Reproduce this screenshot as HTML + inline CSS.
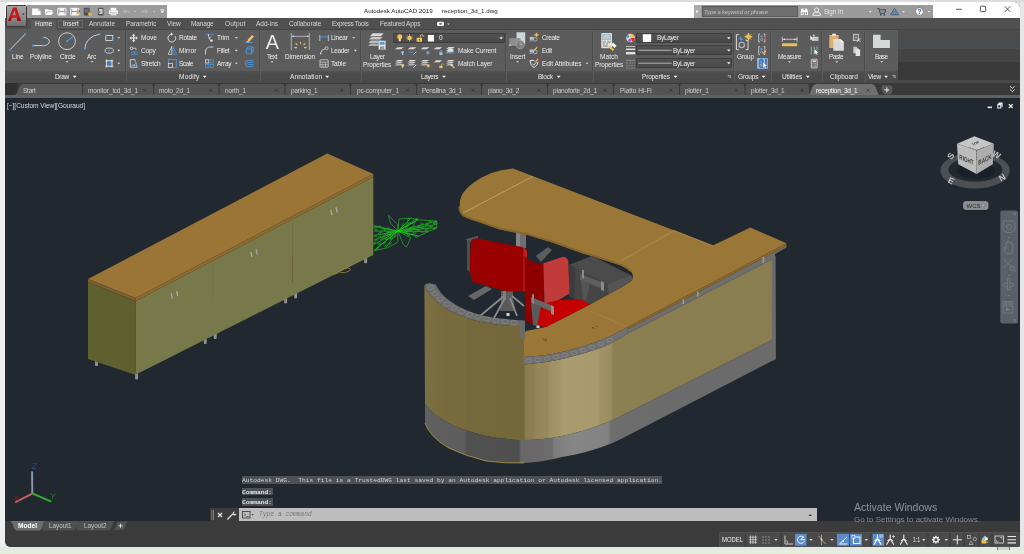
<!DOCTYPE html>
<html><head><meta charset="utf-8"><title>Autodesk AutoCAD 2019 - reception_3d_1.dwg</title>
<style>
html,body{margin:0;padding:0;}
body{width:1024px;height:554px;overflow:hidden;position:relative;background:#e6e6e6;font-family:"Liberation Sans",sans-serif;font-size:7px;color:#e6e6e6;}
body:after{content:"";position:absolute;left:0;top:0;width:1024px;height:2px;background:#dcdcdc;}
body:before{content:"";position:absolute;left:0;top:549.500px;width:1024px;height:4.500px;background:#e3eede;}
#win{position:absolute;left:5px;top:2px;width:1015px;height:545px;background:#3b3b3b;border-radius:2px 6px 2px 6px;overflow:hidden;}
.abs{position:absolute;}
.t{position:absolute;white-space:nowrap;line-height:1;}
svg{position:absolute;overflow:visible;}
/* title */
#title{position:absolute;left:0;top:0;width:1015px;height:16px;background:#fff;}
#qat{position:absolute;left:22px;top:3px;width:140px;height:13px;background:#9b9b9b;}
#info{position:absolute;left:689px;top:3px;width:238px;height:13px;background:#9b9b9b;}
#search{position:absolute;left:696px;top:3px;width:110px;height:13px;background:#6e6e6e;}
#appbtn{position:absolute;left:0px;top:3px;width:22px;height:22px;background:linear-gradient(#9a9a9a,#8c8c8c 60%,#6a6a6a);border:1px solid #3a3a3a;border-radius:2px;box-sizing:border-box;z-index:5;}
/* ribbon tabs */
#ribtabs{position:absolute;left:0;top:16px;width:1015px;height:12px;background:#4d4d4d;}
#ribtabs .t{top:3px;font-size:7px;color:#dcdcdc;}
/* ribbon */
#ribbon{position:absolute;left:0;top:28px;width:1015px;height:53px;background:#3a3a3a;}
.panel{position:absolute;top:0;height:41px;background:#5a5a5a;}
.ptitle{position:absolute;top:41px;height:9px;background:#4b4b4b;}
/* file tabs */
#filetabs{position:absolute;left:0;top:81px;width:1015px;height:14px;background:#404040;}
/* drawing */
#draw{position:absolute;left:0;top:95px;width:1015px;height:424px;background:#212830;overflow:hidden;}
/* status */
#status{position:absolute;left:0;top:519px;width:1015px;height:26px;background:#3b3b3b;}
#cmdhist .hl{position:absolute;left:237px;height:7.500px;line-height:9px;background:#4d5156;color:#cfcfcf;font-family:"Liberation Mono",monospace;font-size:6.250px;white-space:nowrap;overflow:hidden;}
#cmdhist .hl.b{font-weight:bold;color:#e4e4e4;width:31px;}
#cmdbar{position:absolute;left:204.500px;top:505.500px;width:607px;height:13.500px;}
#cmdgrip{position:absolute;left:0;top:0;width:29px;height:13.500px;background:#3c3c3c;}
#cmdin{position:absolute;left:29px;top:0;width:578px;height:13.500px;background:#bebebe;}
#sticons{position:absolute;left:714px;top:12.500px;width:301px;height:12.500px;background:#484848;}
.pg{position:absolute;left:-5px;top:-2px;width:1024px;height:554px;pointer-events:none;}
.t{will-change:transform;}

</style></head>
<body>
<div id="win">
<div class="pg">
<div class="abs" style="left:5px;top:2px;width:1015px;height:16.200px;background:#fff"></div>
<div class="abs" style="left:27px;top:5.300px;width:139.800px;height:12.700px;background:#9b9b9b"></div>
<div class="abs" style="left:694.300px;top:5.300px;width:238.300px;height:12.700px;background:#9b9b9b"></div>
<div class="abs" style="left:694.300px;top:5.300px;width:6.500px;height:12.700px;background:#ababab"></div>
<div class="abs" style="left:701.500px;top:5.800px;width:96px;height:11.700px;background:#6f6f6f;box-sizing:border-box;border:0.600px solid #5a5a5a"></div>
<div class="t" style="left:703.90px;top:10px;font-size:5.8px;color:#c2c2c2;letter-spacing:-0.118px;font-style:italic;">Type a keyword or phrase</div>
<div class="t" style="left:824.00px;top:9px;font-size:6.3px;color:#e4e4e4;letter-spacing:-0.119px;">Sign In</div>
<div class="t" style="left:363.50px;top:8px;font-size:6.2px;color:#1e1e1e;letter-spacing:0.010px;">Autodesk AutoCAD 2019</div>
<div class="t" style="left:442.30px;top:8px;font-size:6.2px;color:#1e1e1e;letter-spacing:-0.008px;">reception_3d_1.dwg</div>
<svg width="1024" height="32" viewBox="0 0 1024 32" style="left:0;top:0">
<path d="M32.100,8.500 h6 l2.600,2.400 v4 h-8.600 z" fill="#fafafa"/><path d="M38.100,8.500 v2.400 h2.600" fill="none" stroke="#9b9b9b" stroke-width="0.5"/>
<path d="M45,9.200 h3 l0.800,0.900 h3.700 v1.300 h-5.700 l-1.800,3.400 z" fill="#fafafa"/><path d="M47.300,12 h6.200 l-1.900,3 h-6.200 z" fill="#fafafa"/>
<path d="M57.8,8.300 h8.100 v6.700 h-8.100 z" fill="none" stroke="#fafafa" stroke-width="0.9"/><rect x="59.4" y="8.300" width="4.900" height="2.600" fill="#fafafa"/><rect x="59.099999999999994" y="12.200" width="5.500" height="2.800" fill="#fafafa"/>
<path d="M70.7,8.300 h8.100 v6.700 h-8.100 z" fill="none" stroke="#fafafa" stroke-width="0.9"/><rect x="72.3" y="8.300" width="4.900" height="2.600" fill="#fafafa"/><rect x="72.0" y="12.200" width="5.500" height="2.800" fill="#fafafa"/>
<path d="M76,13.800 l3,-2.600 l1,1 l-3,2.600 z" fill="#e8b040"/><rect x="78.700" y="10.500" width="1.300" height="1.300" fill="#d02020"/>
<rect x="83.800" y="7.800" width="5.800" height="7.600" rx="0.600" fill="#4c4c4c"/><rect x="84.800" y="8.800" width="3.800" height="4" fill="#6c6c6c"/><path d="M88.300,12.500 h1.400 l0.400,0.500 h1.600 v2.600 h-3.400 z" fill="#f0b840"/>
<rect x="98.200" y="7.800" width="5.200" height="7.800" rx="0.700" fill="#4c4c4c"/><rect x="99" y="8.900" width="3.600" height="5" fill="#cfcfcf"/><path d="M97.300,11.300 h2 v-1 l1.600,1.500 l-1.600,1.500 v-1 h-2 z" fill="#4a90d8"/>
<rect x="110.600" y="7.800" width="5.600" height="2.400" fill="#fafafa"/><rect x="108.900" y="10.200" width="9" height="3.800" rx="0.600" fill="#fafafa"/><rect x="110.600" y="12.600" width="5.600" height="3" fill="#fafafa" stroke="#9b9b9b" stroke-width="0.4"/><path d="M111.500,13.800 h3.800 M111.500,14.800 h3.800" stroke="#9b9b9b" stroke-width="0.4"/>
<path d="M122.200,11.600 l3.600,-2.800 v1.700 q3.600,-0.300 4.700,2.800 q-1.800,-1.300 -4.700,-1 v1.900 z" fill="#b2b2b2"/>
<path d="M148.700,11.600 l-3.600,-2.800 v1.700 q-3.600,-0.300 -4.700,2.800 q1.800,-1.300 4.700,-1 v1.900 z" fill="#b2b2b2"/>
<path d="M134.10,11.05 h2.4 l-1.2,1.5 z" fill="#c4c4c4"/>
<path d="M153.10,11.05 h2.4 l-1.2,1.5 z" fill="#c4c4c4"/>
<rect x="160.500" y="9.400" width="3.800" height="1" fill="#fafafa"/><path d="M160.60,11.30 h3.6 l-1.8,2 z" fill="#fafafa"/>
<path d="M696.300,9.700 l2.200,1.900 l-2.200,1.900 z" fill="#fafafa"/>
<path d="M801.600,8.600 h2 v1.400 h1.400 v-1.400 h2 l0.900,3 v3.400 h-3 v-3 h-1.200 v3 h-3 v-3.400 z" fill="#fafafa"/><rect x="801.600" y="12.300" width="1.200" height="1.900" fill="#8c8c8c"/><rect x="805.800" y="12.300" width="1.200" height="1.900" fill="#8c8c8c"/>
<circle cx="816.700" cy="10" r="2.100" fill="none" stroke="#fafafa" stroke-width="0.800"/><path d="M812.800,15.300 q0,-3 2.500,-3 h2.800 q2.500,0 2.500,3 z" fill="none" stroke="#fafafa" stroke-width="0.800"/>
<path d="M869.10,11.10 h2.6 l-1.3,1.6 z" fill="#ececec"/>
<path d="M877.300,8.500 h1.600 l1.300,4.800 h4.400 l1,-3.500 h-6" fill="none" stroke="#2c3e5a" stroke-width="0.900"/><circle cx="880.800" cy="14.900" r="0.800" fill="#2c3e5a"/><circle cx="884.300" cy="14.900" r="0.800" fill="#2c3e5a"/>
<path d="M894.500,8.300 l4,6.500 h-8 z" fill="none" stroke="#3a5a92" stroke-width="0.900"/><circle cx="894.500" cy="12.800" r="1.500" fill="#9b9b9b" stroke="#3a5a92" stroke-width="0.700"/>
<path d="M902.20,11.10 h2.6 l-1.3,1.6 z" fill="#ececec"/>
<circle cx="919.400" cy="11.600" r="3.900" fill="#fdfdfd" stroke="#4a4a4a" stroke-width="0.500"/>
<text x="919.400" y="14" font-family="Liberation Sans, sans-serif" font-size="6.500" font-weight="bold" fill="#2a56b0" text-anchor="middle">?</text>
<path d="M927.70,11.10 h2.6 l-1.3,1.6 z" fill="#ececec"/>
<path d="M956,9.300 h5.800" stroke="#444" stroke-width="0.900"/>
<rect x="980.400" y="6.200" width="5.300" height="5.400" rx="0.800" fill="none" stroke="#444" stroke-width="0.900"/>
<path d="M1004.800,6.300 l5.400,5.600 M1010.200,6.300 l-5.400,5.600" stroke="#444" stroke-width="0.900"/>
</svg>
<div class="abs" style="left:5.500px;top:5px;width:21.500px;height:22.300px;background:linear-gradient(#a2a2a2,#8e8e8e 55%,#6e6e6e);border:0.800px solid #3c3c3c;border-radius:1.500px;box-sizing:border-box;z-index:6"></div>
<svg width="24" height="24" viewBox="5 4 24 24" style="left:5px;top:4px;z-index:7"><path d="M8,21 L13,7.500 h3.600 L21,21 h-3.400 l-0.900,-3.200 h-5 l-1,3.200 z M12.700,15.200 h3.200 l-1.500,-5 z" fill="#c8181c" fill-rule="evenodd"/><path d="M8,21 l2.700,0 l1,-3.200 l-1.700,-0.600 z M17.600,21 h3.400 l-1,-3.400 l-3.200,0.400 z" fill="#9c0f12"/><path d="M22.00,13.50 h2.6 l-1.3,1.6 z" fill="#222"/></svg>
</div><div class="pg">
<div class="abs" style="left:5px;top:17.900px;width:1015px;height:12px;background:#505050"></div>
<div class="abs" style="left:31px;top:19.800px;width:25.300px;height:9.600px;background:#5c5c5c;border-radius:1px 1px 0 0"></div>
<div class="abs" style="left:58.400px;top:19.600px;width:25px;height:8.200px;box-sizing:border-box;border:0.700px solid #6a6661;background:#525252"></div>
<div class="t" style="left:34.70px;top:21px;font-size:6.5px;color:#f4f4f4;letter-spacing:-0.013px;">Home</div>
<div class="t" style="left:62.80px;top:21px;font-size:6.5px;color:#f4f4f4;letter-spacing:-0.091px;">Insert</div>
<div class="t" style="left:89.00px;top:21px;font-size:6.5px;color:#d6d6d6;letter-spacing:0.025px;">Annotate</div>
<div class="t" style="left:126.00px;top:21px;font-size:6.5px;color:#d6d6d6;letter-spacing:-0.125px;">Parametric</div>
<div class="t" style="left:167.00px;top:21px;font-size:6.5px;color:#d6d6d6;letter-spacing:-0.091px;">View</div>
<div class="t" style="left:191.40px;top:21px;font-size:6.5px;color:#d6d6d6;letter-spacing:-0.158px;">Manage</div>
<div class="t" style="left:224.90px;top:21px;font-size:6.5px;color:#d6d6d6;letter-spacing:0.137px;">Output</div>
<div class="t" style="left:256.00px;top:21px;font-size:6.5px;color:#d6d6d6;letter-spacing:-0.007px;">Add-ins</div>
<div class="t" style="left:289.00px;top:21px;font-size:6.5px;color:#d6d6d6;letter-spacing:-0.094px;">Collaborate</div>
<div class="t" style="left:332.00px;top:21px;font-size:6.5px;color:#d6d6d6;letter-spacing:-0.304px;">Express Tools</div>
<div class="t" style="left:379.80px;top:21px;font-size:6.5px;color:#d6d6d6;letter-spacing:-0.157px;">Featured Apps</div>
<svg width="20" height="12" viewBox="435 18 20 12" style="left:435px;top:18px"><rect x="437" y="21.800" width="7" height="4.200" rx="1.200" fill="#f0f0f0"/><rect x="439.300" y="23.200" width="2.400" height="1.400" fill="#555"/><path d="M447.00,23.40 h2.6 l-1.3,1.6 z" fill="#ddd"/></svg>
</div><div class="pg">
<div class="abs" style="left:5px;top:29.3px;width:892.5px;height:53.6px;background:#5c5c5c"></div>
<div class="abs" style="left:5px;top:71.2px;width:892.5px;height:11.7px;background:linear-gradient(#525252,#4b4b4b 30%,#4a4a4a)"></div>
<div class="abs" style="left:897.5px;top:29.3px;width:122.5px;height:53.6px;background:#4c4c4c"></div>
<div class="abs" style="left:897.5px;top:38.5px;width:122.5px;height:44.4px;background:#4a4d50"></div>
<div class="abs" style="left:897.5px;top:49px;width:122.5px;height:33.9px;background:#444444"></div>
<div class="abs" style="left:897.5px;top:62.3px;width:122.5px;height:20.6px;background:#3a3a3a"></div>
<div class="abs" style="left:897.5px;top:79.6px;width:122.5px;height:3.3px;background:#494949"></div>
<div class="abs" style="left:57px;top:28.6px;width:963px;height:1.1px;background:#454545"></div>
<div class="abs" style="left:124.5px;top:30.500px;width:1px;height:51px;background:#4c4c4c"></div>
<div class="abs" style="left:125.5px;top:30.500px;width:0.600px;height:51px;background:#646464;opacity:.6"></div>
<div class="abs" style="left:258.9px;top:30.500px;width:1px;height:51px;background:#4c4c4c"></div>
<div class="abs" style="left:259.9px;top:30.500px;width:0.600px;height:51px;background:#646464;opacity:.6"></div>
<div class="abs" style="left:359.8px;top:30.500px;width:1px;height:51px;background:#4c4c4c"></div>
<div class="abs" style="left:360.8px;top:30.500px;width:0.600px;height:51px;background:#646464;opacity:.6"></div>
<div class="abs" style="left:505.2px;top:30.500px;width:1px;height:51px;background:#4c4c4c"></div>
<div class="abs" style="left:506.2px;top:30.500px;width:0.600px;height:51px;background:#646464;opacity:.6"></div>
<div class="abs" style="left:591.5px;top:30.500px;width:1px;height:51px;background:#4c4c4c"></div>
<div class="abs" style="left:592.5px;top:30.500px;width:0.600px;height:51px;background:#646464;opacity:.6"></div>
<div class="abs" style="left:733.0px;top:30.500px;width:1px;height:51px;background:#4c4c4c"></div>
<div class="abs" style="left:734.0px;top:30.500px;width:0.600px;height:51px;background:#646464;opacity:.6"></div>
<div class="abs" style="left:769.6px;top:30.500px;width:1px;height:51px;background:#4c4c4c"></div>
<div class="abs" style="left:770.6px;top:30.500px;width:0.600px;height:51px;background:#646464;opacity:.6"></div>
<div class="abs" style="left:821.3px;top:30.500px;width:1px;height:51px;background:#4c4c4c"></div>
<div class="abs" style="left:822.3px;top:30.500px;width:0.600px;height:51px;background:#646464;opacity:.6"></div>
<div class="abs" style="left:863.8px;top:30.500px;width:1px;height:51px;background:#4c4c4c"></div>
<div class="abs" style="left:864.8px;top:30.500px;width:0.600px;height:51px;background:#646464;opacity:.6"></div>
<div class="abs" style="left:393.4px;top:33px;width:111.2px;height:10.3px;background:linear-gradient(#515151,#494949);box-sizing:border-box;border:0.700px solid #3d3d3d;border-radius:1px"></div>
<div class="abs" style="left:636px;top:33px;width:95.6px;height:10.3px;background:linear-gradient(#515151,#494949);box-sizing:border-box;border:0.700px solid #3d3d3d;border-radius:1px"></div>
<div class="abs" style="left:636px;top:45.3px;width:95.6px;height:10.1px;background:linear-gradient(#515151,#494949);box-sizing:border-box;border:0.700px solid #3d3d3d;border-radius:1px"></div>
<div class="abs" style="left:636px;top:58px;width:95.6px;height:10.3px;background:linear-gradient(#515151,#494949);box-sizing:border-box;border:0.700px solid #3d3d3d;border-radius:1px"></div>
<div class="abs" style="left:756.500px;top:58px;width:11.700px;height:11px;background:#4b79ba;border:0.500px solid #7aa4dc;box-sizing:border-box"></div>
<div class="t" style="left:11.80px;top:54px;font-size:6.5px;color:#ececec;letter-spacing:-0.230px;">Line</div>
<div class="t" style="left:29.70px;top:54px;font-size:6.5px;color:#ececec;letter-spacing:-0.123px;">Polyline</div>
<div class="t" style="left:59.60px;top:54px;font-size:6.5px;color:#ececec;letter-spacing:-0.203px;">Circle</div>
<div class="t" style="left:87.40px;top:54px;font-size:6.5px;color:#ececec;letter-spacing:-0.225px;">Arc</div>
<div class="t" style="left:55.20px;top:74px;font-size:6.5px;color:#ececec;letter-spacing:-0.356px;">Draw</div>
<div class="t" style="left:141.10px;top:35px;font-size:6.5px;color:#ececec;letter-spacing:-0.032px;">Move</div>
<div class="t" style="left:141.10px;top:48px;font-size:6.5px;color:#ececec;letter-spacing:-0.158px;">Copy</div>
<div class="t" style="left:141.10px;top:61px;font-size:6.5px;color:#ececec;letter-spacing:-0.149px;">Stretch</div>
<div class="t" style="left:179.40px;top:35px;font-size:6.5px;color:#ececec;letter-spacing:-0.210px;">Rotate</div>
<div class="t" style="left:179.40px;top:48px;font-size:6.5px;color:#ececec;letter-spacing:0.086px;">Mirror</div>
<div class="t" style="left:179.40px;top:61px;font-size:6.5px;color:#ececec;letter-spacing:-0.490px;">Scale</div>
<div class="t" style="left:216.70px;top:35px;font-size:6.5px;color:#ececec;letter-spacing:-0.151px;">Trim</div>
<div class="t" style="left:216.70px;top:48px;font-size:6.5px;color:#ececec;letter-spacing:-0.225px;">Fillet</div>
<div class="t" style="left:216.70px;top:61px;font-size:6.5px;color:#ececec;letter-spacing:-0.258px;">Array</div>
<div class="t" style="left:178.80px;top:74px;font-size:6.5px;color:#ececec;letter-spacing:0.211px;">Modify</div>
<div class="t" style="left:267.00px;top:54px;font-size:6.5px;color:#ececec;letter-spacing:-0.507px;">Text</div>
<div class="t" style="left:285.30px;top:54px;font-size:6.5px;color:#ececec;letter-spacing:-0.076px;">Dimension</div>
<div class="t" style="left:331.00px;top:35px;font-size:6.5px;color:#ececec;letter-spacing:-0.254px;">Linear</div>
<div class="t" style="left:331.00px;top:48px;font-size:6.5px;color:#ececec;letter-spacing:-0.388px;">Leader</div>
<div class="t" style="left:331.00px;top:61px;font-size:6.5px;color:#ececec;letter-spacing:-0.135px;">Table</div>
<div class="t" style="left:290.00px;top:74px;font-size:6.5px;color:#ececec;letter-spacing:0.102px;">Annotation</div>
<div class="t" style="left:370.00px;top:54px;font-size:6.5px;color:#ececec;letter-spacing:-0.315px;">Layer</div>
<div class="t" style="left:363.00px;top:62px;font-size:6.5px;color:#ececec;letter-spacing:-0.158px;">Properties</div>
<div class="t" style="left:458.10px;top:48px;font-size:6.5px;color:#ececec;letter-spacing:-0.098px;">Make Current</div>
<div class="t" style="left:458.10px;top:61px;font-size:6.5px;color:#ececec;letter-spacing:-0.127px;">Match Layer</div>
<div class="t" style="left:420.90px;top:74px;font-size:6.5px;color:#ececec;letter-spacing:-0.422px;">Layers</div>
<div class="t" style="left:439.00px;top:35px;font-size:6.5px;color:#ececec;">0</div>
<div class="t" style="left:510.00px;top:54px;font-size:6.5px;color:#ececec;letter-spacing:-0.211px;">Insert</div>
<div class="t" style="left:541.70px;top:35px;font-size:6.5px;color:#ececec;letter-spacing:-0.322px;">Create</div>
<div class="t" style="left:541.70px;top:48px;font-size:6.5px;color:#ececec;letter-spacing:-0.367px;">Edit</div>
<div class="t" style="left:541.70px;top:61px;font-size:6.5px;color:#ececec;letter-spacing:-0.050px;">Edit Attributes</div>
<div class="t" style="left:537.90px;top:74px;font-size:6.5px;color:#ececec;letter-spacing:-0.224px;">Block</div>
<div class="t" style="left:600.20px;top:54px;font-size:6.5px;color:#ececec;letter-spacing:0.050px;">Match</div>
<div class="t" style="left:594.70px;top:62px;font-size:6.5px;color:#ececec;letter-spacing:-0.158px;">Properties</div>
<div class="t" style="left:656.70px;top:35px;font-size:6.5px;color:#ececec;letter-spacing:-0.341px;">ByLayer</div>
<div class="t" style="left:673.00px;top:48px;font-size:6.5px;color:#ececec;letter-spacing:-0.274px;">ByLayer</div>
<div class="t" style="left:673.00px;top:61px;font-size:6.5px;color:#ececec;letter-spacing:-0.274px;">ByLayer</div>
<div class="t" style="left:641.90px;top:74px;font-size:6.5px;color:#ececec;letter-spacing:-0.181px;">Properties</div>
<div class="t" style="left:736.60px;top:54px;font-size:6.5px;color:#ececec;letter-spacing:-0.241px;">Group</div>
<div class="t" style="left:737.90px;top:74px;font-size:6.5px;color:#ececec;letter-spacing:-0.163px;">Groups</div>
<div class="t" style="left:777.70px;top:54px;font-size:6.5px;color:#ececec;letter-spacing:-0.315px;">Measure</div>
<div class="t" style="left:781.90px;top:74px;font-size:6.5px;color:#ececec;letter-spacing:-0.093px;">Utilities</div>
<div class="t" style="left:829.30px;top:54px;font-size:6.5px;color:#ececec;letter-spacing:-0.480px;">Paste</div>
<div class="t" style="left:829.60px;top:74px;font-size:6.5px;color:#ececec;">Clipboard</div>
<div class="t" style="left:875.10px;top:54px;font-size:6.5px;color:#ececec;letter-spacing:-0.600px;">Base</div>
<div class="t" style="left:867.60px;top:74px;font-size:6.5px;color:#ececec;letter-spacing:-0.257px;">View</div>
<svg width="1024" height="60" viewBox="0 28 1024 60" style="left:0;top:28px">
<path d="M10.300,49.500 L25.300,34" stroke="#e9e9e9" stroke-width="0.8"/><rect x="9.40" y="48.60" width="1.8" height="1.8" fill="#4a9be6"/><rect x="24.40" y="33.10" width="1.8" height="1.8" fill="#4a9be6"/>
<path d="M32.900,45.600 H43.600 A5.700,4.100 0 0 0 43.600,37.400" fill="none" stroke="#e9e9e9" stroke-width="0.8"/><rect x="32.00" y="44.70" width="1.8" height="1.8" fill="#4a9be6"/><rect x="42.70" y="44.70" width="1.8" height="1.8" fill="#4a9be6"/><rect x="42.70" y="36.50" width="1.8" height="1.8" fill="#4a9be6"/>
<circle cx="67" cy="41.200" r="8.400" fill="none" stroke="#e9e9e9" stroke-width="0.8"/><path d="M67,41.200 L72,37.400" stroke="#4a9be6" stroke-width="1.1"/><rect x="66.20" y="40.40" width="1.6" height="1.6" fill="#4a9be6"/><rect x="71.20" y="36.60" width="1.6" height="1.6" fill="#4a9be6"/>
<path d="M84.900,48.700 Q85.500,37 99.600,34.200" fill="none" stroke="#e9e9e9" stroke-width="0.8"/><rect x="84.00" y="47.80" width="1.8" height="1.8" fill="#4a9be6"/><rect x="88.80" y="38.30" width="1.8" height="1.8" fill="#4a9be6"/><rect x="98.70" y="33.30" width="1.8" height="1.8" fill="#4a9be6"/>
<path d="M65.60,61.15 h2.8 l-1.4,1.7 z" fill="#e8e8e8"/><path d="M90.60,61.15 h2.8 l-1.4,1.7 z" fill="#e8e8e8"/>
<rect x="105.800" y="35.500" width="7" height="5" fill="none" stroke="#e9e9e9" stroke-width="0.8"/><rect x="105.10" y="34.80" width="1.4" height="1.4" fill="#4a9be6"/><rect x="112.10" y="39.80" width="1.4" height="1.4" fill="#4a9be6"/><path d="M117.40,37.15 h2.8 l-1.4,1.7 z" fill="#e8e8e8"/>
<ellipse cx="109.200" cy="50.600" rx="4.200" ry="2.600" fill="none" stroke="#e9e9e9" stroke-width="0.8"/><rect x="108.50" y="49.90" width="1.4" height="1.4" fill="#4a9be6"/><path d="M117.40,49.75 h2.8 l-1.4,1.7 z" fill="#e8e8e8"/>
<rect x="106.600" y="60.800" width="5.400" height="5.400" fill="#3f6fa8" stroke="#e9e9e9" stroke-width="0.7"/><path d="M105,60.800 h8.600 M105,66.200 h8.600 M106.600,59.200 v8.600 M112,59.200 v8.600" stroke="#e9e9e9" stroke-width="0.6"/><path d="M107.600,65.200 l3.400,-3.400" stroke="#4a9be6" stroke-width="0.8"/><path d="M117.40,62.65 h2.8 l-1.4,1.7 z" fill="#e8e8e8"/>
<path d="M72.70,75.70 h4.0 l-2.0,2.2 z" fill="#f0f0f0"/>
<path d="M133.600,33.800 l1.700,2 h-1.100 v1.600 h1.600 v-1.100 l2,1.700 l-2,1.700 v-1.100 h-1.600 v1.600 h1.100 l-1.700,2 l-1.700,-2 h1.100 v-1.600 h-1.600 v1.100 l-2,-1.700 l2,-1.700 v1.100 h1.600 v-1.600 h-1.100 z" fill="#e9e9e9"/>
<circle cx="131.500" cy="48.200" r="1.300" fill="none" stroke="#e9e9e9" stroke-width="0.7"/><path d="M132.800,48.200 h3.200 v1.800" fill="none" stroke="#e9e9e9" stroke-width="0.7"/><circle cx="133" cy="53.200" r="1.500" fill="none" stroke="#4a9be6" stroke-width="0.8"/><circle cx="136.200" cy="53.200" r="1.500" fill="none" stroke="#4a9be6" stroke-width="0.8"/>
<path d="M130.300,59.600 h4.600 l2.300,7.600 h-6.900 z" fill="none" stroke="#e9e9e9" stroke-width="0.8"/><path d="M134.900,59.600 l2.300,7.600" stroke="#4a9be6" stroke-width="0.9"/><path d="M131.500,65.200 h3.600 l-1,-0.900 m1,0.900 l-1,0.900" stroke="#e9e9e9" stroke-width="0.6" fill="none"/>
<path d="M175.300,36.200 a3.900,3.900 0 1 1 -3.600,-2" fill="none" stroke="#e9e9e9" stroke-width="0.9"/><path d="M170.800,32.600 l2.400,1.500 l-2.200,1.700 z" fill="#e9e9e9"/>
<path d="M171.800,46.600 v7.800 h-3.600 z" fill="none" stroke="#e9e9e9" stroke-width="0.7"/><path d="M173,46.600 v7.800 h3.600 z" fill="none" stroke="#4a9be6" stroke-width="0.8"/>
<rect x="168.300" y="59.500" width="8" height="8" fill="none" stroke="#4a9be6" stroke-width="0.8"/><rect x="168.300" y="63.300" width="4.200" height="4.200" fill="#5c5c5c" stroke="#e9e9e9" stroke-width="0.7"/>
<path d="M205.600,34.300 h8.400" stroke="#4a9be6" stroke-width="0.8"/><path d="M208.500,34.300 v2.300 l2.400,4.600 M211,36.600 l-2.200,2.200" stroke="#e9e9e9" stroke-width="0.8" fill="none"/><rect x="210.300" y="39.600" width="2.300" height="2" fill="#e9e9e9"/>
<path d="M205.500,54.500 v-2.600 q0,-4.900 4.900,-4.900 h3" fill="none" stroke="#e9e9e9" stroke-width="0.8"/><path d="M206.800,47.700 q1.600,-0.800 3.600,-0.700" stroke="#4a9be6" stroke-width="0.8" fill="none"/>
<rect x="205.6" y="59.8" width="3.200" height="3.200" fill="none" stroke="#e9e9e9" stroke-width="0.7"/>
<rect x="205.6" y="64.4" width="3.200" height="3.200" fill="none" stroke="#4a9be6" stroke-width="0.7"/>
<rect x="210.2" y="59.8" width="3.200" height="3.200" fill="none" stroke="#4a9be6" stroke-width="0.7"/>
<rect x="210.2" y="64.4" width="3.200" height="3.200" fill="none" stroke="#4a9be6" stroke-width="0.7"/>
<path d="M234.90,37.15 h2.8 l-1.4,1.7 z" fill="#e8e8e8"/><path d="M234.90,49.75 h2.8 l-1.4,1.7 z" fill="#e8e8e8"/><path d="M234.90,62.65 h2.8 l-1.4,1.7 z" fill="#e8e8e8"/><path d="M202.70,75.70 h4.0 l-2.0,2.2 z" fill="#f0f0f0"/>
<path d="M247,40.500 l5,-5.600 l2,1.600 l-5,5.600 z" fill="#f0c257"/><path d="M246.200,41.400 l0.800,-0.900 l2,1.600 l-0.800,0.900 z" fill="#f4f4f4"/><path d="M245,42.500 h7.500" stroke="#4a9be6" stroke-width="0.8"/><rect x="246.300" y="39.800" width="1.600" height="1.500" fill="#d83030"/>
<path d="M246.300,48.800 h5 v5 h-5 z M246.300,48.800 l1.800,-1.800 h5 l-1.800,1.800 M253.100,47 v5 l-1.800,1.800" fill="none" stroke="#4a9be6" stroke-width="0.9"/>
<path d="M253.300,60.400 h-5 a3.100,3.100 0 0 0 0,6.200 h5 M253.300,62.400 h-4.800 a1.100,1.100 0 0 0 0,2.200 h4.800" fill="none" stroke="#4a9be6" stroke-width="0.9"/>
<text x="272.300" y="48.600" font-family="Liberation Sans, sans-serif" font-size="19.800" fill="#e9e9e9" text-anchor="middle">A</text><path d="M270.60,61.15 h2.8 l-1.4,1.7 z" fill="#e8e8e8"/>
<path d="M291.300,33 v17 M309.300,33 v17" stroke="#e9e9e9" stroke-width="0.6"/><path d="M291.800,36.300 h17" stroke="#e9e9e9" stroke-width="0.6"/><path d="M292,36.300 l1.800,-0.900 v1.800 z M308.800,36.300 l-1.800,-0.900 v1.800 z" fill="#e9e9e9"/><path d="M294.300,47.600 h2.600 M304,47.600 h2.600 M295.500,43.400 l1.900,1.600 M305.400,43.400 l-1.900,1.600 M300.300,42 l0.500,1.900" stroke="#f0c257" stroke-width="1.1"/>
<path d="M319.800,35 v6 M328.300,35 v6" stroke="#e9e9e9" stroke-width="0.7"/><path d="M319.800,36.900 h8.500" stroke="#4a9be6" stroke-width="0.9"/>
<path d="M320.500,53.800 q0.500,-4.500 4.600,-5" fill="none" stroke="#e9e9e9" stroke-width="0.7"/><circle cx="326.600" cy="48.200" r="1.500" fill="none" stroke="#e9e9e9" stroke-width="0.7"/><path d="M320,54.400 l0.300,-2 l1.400,1 z" fill="#e9e9e9"/>
<rect x="320" y="59.800" width="8.200" height="7.400" rx="0.800" fill="none" stroke="#e9e9e9" stroke-width="0.7"/><path d="M320,62.200 h8.200 M320,64.700 h8.200 M322.800,62.200 v5 M325.500,62.200 v5" stroke="#e9e9e9" stroke-width="0.5"/>
<path d="M352.40,37.15 h2.8 l-1.4,1.7 z" fill="#e8e8e8"/><path d="M354.00,49.75 h2.8 l-1.4,1.7 z" fill="#e8e8e8"/><path d="M325.20,75.70 h4.0 l-2.0,2.2 z" fill="#f0f0f0"/>
<path d="M372.6,33.2 h11 l-2.600,3 h-11 z" fill="#d9d9d9"/><path d="M371.6,37.0 h11 l-2.600,2.6 h-11 z" fill="#c8c8c8"/><path d="M370.9,40.4 h11 l-2.600,2.6 h-11 z" fill="#bdbdbd"/><path d="M370.6,43.6 h10 l-2.600,2.3 h-10 z" fill="#b0b0b0"/>
<rect x="378.500" y="40.800" width="7.200" height="8.800" fill="#ececec" stroke="#888" stroke-width="0.4"/><rect x="379.600" y="41.800" width="5" height="3" fill="#5b9bd5"/><rect x="380" y="46.300" width="4.200" height="3.300" fill="#9a9a9a"/>
<circle cx="399.800" cy="36.700" r="2.500" fill="#f0c257"/><rect x="398.800" y="39" width="2" height="2.200" fill="#e6e6e6"/>
<circle cx="409.500" cy="38" r="2.200" fill="#f0c257"/><path d="M409.500,34.300 v7.400 M405.800,38 h7.400 M406.900,35.400 l5.200,5.200 M412.100,35.400 l-5.200,5.200" stroke="#f0c257" stroke-width="0.6"/>
<rect x="416.600" y="37.800" width="5.400" height="4" fill="#f0c257"/><path d="M420.300,37.800 v-1.600 a1.500,1.500 0 0 1 3,0 v0.800" fill="none" stroke="#f0c257" stroke-width="0.8"/><rect x="418.900" y="39" width="0.900" height="1.600" fill="#7a5a10"/>
<rect x="427.600" y="34.700" width="6.600" height="7.200" fill="#fdfdfd" stroke="#2f2f2f" stroke-width="0.500"/>
<path d="M499.40,37.15 h3.6 l-1.8,2.1 z" fill="#f4f4f4"/>
<path d="M397.6,47.3 h6 l-2.600,2 h-6 z" fill="#d9d9d9"/>
<path d="M397.6,59.9 h6 l-2.600,1.7 h-6 z" fill="#dcdcdc"/><path d="M397.3,61.9 h6 l-2.600,1.7 h-6 z" fill="#c6c6c6"/><path d="M397.0,63.9 h6 l-2.600,1.7 h-6 z" fill="#b4b4b4"/>
<path d="M410.3,47.3 h6 l-2.600,2 h-6 z" fill="#d9d9d9"/>
<path d="M410.3,59.9 h6 l-2.600,1.7 h-6 z" fill="#dcdcdc"/><path d="M410.0,61.9 h6 l-2.600,1.7 h-6 z" fill="#c6c6c6"/><path d="M409.7,63.9 h6 l-2.600,1.7 h-6 z" fill="#b4b4b4"/>
<path d="M423.3,47.3 h6 l-2.600,2 h-6 z" fill="#d9d9d9"/>
<path d="M423.3,59.9 h6 l-2.600,1.7 h-6 z" fill="#dcdcdc"/><path d="M423.0,61.9 h6 l-2.600,1.7 h-6 z" fill="#c6c6c6"/><path d="M422.7,63.9 h6 l-2.600,1.7 h-6 z" fill="#b4b4b4"/>
<path d="M436.2,47.3 h6 l-2.600,2 h-6 z" fill="#d9d9d9"/>
<path d="M436.2,60.2 h6 l-2.600,2 h-6 z" fill="#d9d9d9"/>
<path d="M448.8,47.0 h6 l-2.600,1.7 h-6 z" fill="#dcdcdc"/><path d="M448.5,49.0 h6 l-2.600,1.7 h-6 z" fill="#c6c6c6"/><path d="M448.2,51.0 h6 l-2.600,1.7 h-6 z" fill="#b4b4b4"/>
<path d="M448.8,59.9 h6 l-2.600,1.7 h-6 z" fill="#dcdcdc"/><path d="M448.5,61.9 h6 l-2.600,1.7 h-6 z" fill="#c6c6c6"/><path d="M448.2,63.9 h6 l-2.600,1.7 h-6 z" fill="#b4b4b4"/>
<circle cx="402.600" cy="52.200" r="1.300" fill="#9cc4f0"/><rect x="402" y="53.400" width="1.200" height="1.300" fill="#e8e8e8"/>
<path d="M413.400,54.600 l2.800,-2.800" stroke="#f0f0f0" stroke-width="0.9"/><path d="M408.300,52.200 h5" stroke="#4a9be6" stroke-width="0.8"/>
<path d="M427.800,50.800 v3.800 M425.900,52.700 h3.800 M426.500,51.400 l2.600,2.600 M429.100,51.400 l-2.600,2.600" stroke="#7ab4f0" stroke-width="0.6"/>
<rect x="439.300" y="52.400" width="3.200" height="2.600" fill="#9cc4f0"/><path d="M440,52.400 v-0.900 a0.900,0.900 0 0 1 1.800,0 v0.900" fill="none" stroke="#9cc4f0" stroke-width="0.6"/>
<path d="M448.500,49.500 q2,-2.600 4,0 l1.500,2 h-7 z" fill="#e4e4e4"/><path d="M446.800,53 h7.500" stroke="#4a9be6" stroke-width="0.9"/>
<circle cx="402.700" cy="65.200" r="1.500" fill="#f0c257"/><rect x="402.100" y="66.500" width="1.200" height="1.200" fill="#e8e8e8"/>
<path d="M413.400,67.600 l2.800,-2.800" stroke="#f0f0f0" stroke-width="0.9"/><path d="M408.300,65.700 h5" stroke="#4a9be6" stroke-width="0.8"/>
<circle cx="428.200" cy="65.800" r="1.200" fill="#f0c257"/><path d="M428.200,63.800 v4 M426.200,65.800 h4 M426.800,64.400 l2.800,2.800 M429.600,64.400 l-2.800,2.800" stroke="#f0c257" stroke-width="0.5"/>
<rect x="439.300" y="65.600" width="3.200" height="2.500" fill="#f0c257"/><path d="M441.600,65.600 v-1 a0.900,0.900 0 0 1 1.800,0" fill="none" stroke="#f0c257" stroke-width="0.6"/>
<path d="M451.800,65.400 l2.600,2.600" stroke="#f0c257" stroke-width="1.300"/><path d="M450.800,64.400 l1.400,1.400" stroke="#f4f4f4" stroke-width="1.300"/>
<path d="M442.00,75.70 h4.0 l-2.0,2.2 z" fill="#f0f0f0"/>
<rect x="516.500" y="32.300" width="8.700" height="11.500" fill="#c9d8d9"/><path d="M522.600,32.300 l2.600,2.600 h-2.600 z" fill="#eef4f4"/><rect x="509.200" y="38.200" width="11.300" height="7.600" fill="#8e8e8e"/><rect x="509.200" y="44.600" width="1.500" height="1.200" fill="#e8e8e8"/><circle cx="520.200" cy="44.600" r="4.200" fill="#7e7e7e" stroke="#b4b4b4" stroke-width="0.600"/><path d="M520.200,41.600 v3 h2.600" stroke="#c4c4c4" stroke-width="0.6" fill="none"/>
<path d="M523.400,33.800 v0.900 M525.300,37.200 v0.900 M525.300,43.300 v0.900" stroke="#4a9be6" stroke-width="0.9"/>
<path d="M516.10,61.15 h2.8 l-1.4,1.7 z" fill="#e8e8e8"/>
<rect x="529.7" y="36.8" width="4" height="3" fill="#bdbdbd"/><circle cx="535.3" cy="39.3" r="1.800" fill="none" stroke="#d0d0d0" stroke-width="0.7"/><path d="M529.7,40.8 h3" stroke="#d0d0d0" stroke-width="0.6"/><path d="M536.500,32.800 l0.600,1.500 l1.500,0.600 l-1.500,0.600 l-0.600,1.500 l-0.600,-1.500 l-1.500,-0.600 l1.500,-0.600 z" fill="#f0c257" stroke="#f0c257" stroke-width="0.6"/>
<rect x="529.7" y="49.4" width="4" height="3" fill="#bdbdbd"/><circle cx="535.3" cy="51.9" r="1.800" fill="none" stroke="#d0d0d0" stroke-width="0.7"/><path d="M529.7,53.4 h3" stroke="#d0d0d0" stroke-width="0.6"/><path d="M534.500,50 l2.800,-2.800" stroke="#f0c257" stroke-width="1.200"/><rect x="537" y="45.900" width="1.300" height="1.300" fill="#e03030"/>
<path d="M530,60.500 h4 l1,1 M530,60.500 q-0.300,4 4,7.300 q4.300,-3.300 4,-6" fill="none" stroke="#e4e4e4" stroke-width="1"/><path d="M532.300,63.600 l1.500,1.500 l2.600,-3" stroke="#e4e4e4" stroke-width="0.9" fill="none"/><path d="M535.600,61.600 l2.600,-2.600" stroke="#f0c257" stroke-width="1.200"/><rect x="537.800" y="58.200" width="1.300" height="1.300" fill="#e03030"/>
<path d="M585.60,62.65 h2.8 l-1.4,1.7 z" fill="#e8e8e8"/><path d="M556.70,75.70 h4.0 l-2.0,2.2 z" fill="#f0f0f0"/>
<rect x="601.200" y="33" width="10.800" height="15.200" rx="0.700" fill="#dedede"/><rect x="602.600" y="34.500" width="8" height="5.200" fill="#b9cfc2" stroke="#3c7cc8" stroke-width="0.500" stroke-dasharray="1 0.6"/><path d="M602.800,42 h3 M607,42 h3.600 M602.800,44 h2 M606,44 h2 M602.800,46 h5" stroke="#7a7a7a" stroke-width="0.900"/>
<path d="M609.600,45.600 l4.500,3.800 l-1.300,1.500 l-4.500,-3.800 z" fill="#f0c257"/><path d="M613,42.600 l3.600,3.100 l-2,2.300 l-3.600,-3.100 z" fill="#f4f4f4"/>
<circle cx="630.500" cy="38" r="4.300" fill="#d9d9d9"/><path d="M630.500,38 v-4.300 a4.300,4.300 0 0 1 4.300,4.300 z" fill="#f0c257"/><path d="M630.500,38 h4.300 a4.300,4.300 0 0 1 -2.300,3.700 z" fill="#d82828"/><circle cx="629.800" cy="40.300" r="1.500" fill="#a050d8"/><circle cx="628" cy="36.500" r="1.200" fill="#3a8be0"/>
<path d="M626,46.500 h9.200" stroke="#d8d8d8" stroke-width="0.8"/><path d="M626,49.300 h9.200" stroke="#dedede" stroke-width="1.500"/><path d="M626,53.200 h9.200" stroke="#e4e4e4" stroke-width="2.300"/>
<path d="M626,60.300 h9.200" stroke="#9a9a9a" stroke-width="0.800"/><path d="M626,63 h9.200" stroke="#8c8c8c" stroke-width="1" stroke-dasharray="2 0.8"/><path d="M626,65.500 h9.200" stroke="#8c8c8c" stroke-width="1" stroke-dasharray="0.9 0.7"/><path d="M626,68 h9.200" stroke="#8c8c8c" stroke-width="1" stroke-dasharray="2.600 0.700 0.800 0.700"/>
<rect x="642.800" y="34.200" width="8.400" height="7.800" fill="#fdfdfd"/>
<path d="M638.300,50.300 h33.500 M638.300,63.200 h33.500" stroke="#dcdcdc" stroke-width="0.700"/>
<path d="M727.00,37.15 h3.6 l-1.8,2.1 z" fill="#f4f4f4"/><path d="M727.00,49.45 h3.6 l-1.8,2.1 z" fill="#f4f4f4"/><path d="M727.00,62.25 h3.6 l-1.8,2.1 z" fill="#f4f4f4"/>
<path d="M673.60,75.70 h4.0 l-2.0,2.2 z" fill="#f0f0f0"/><path d="M727.800,75.400 h2.600 v2.600 M730.400,78 l-2.400,-2.400" stroke="#cfcfcf" stroke-width="0.600" fill="none"/>
<path d="M738.600,34.600 h-2.200 v15 h2.200 M745.800,40.600 h2.200 v9 h-2.200" fill="none" stroke="#e9e9e9" stroke-width="0.9"/><circle cx="741.300" cy="38.600" r="2" fill="#4a9be6"/><rect x="741.300" y="36.400" width="2.300" height="2.200" fill="#5c5c5c"/><circle cx="741.700" cy="45" r="2.700" fill="none" stroke="#bdbdbd" stroke-width="1.100"/>
<path d="M748.500,33 l1,2.700 l2.800,1 l-2.800,1 l-1,2.700 l-1,-2.700 l-2.800,-1 l2.800,-1 z M745.500,34 l6,6 M751.500,34 l-6,6" fill="#f0c257" stroke="#f0c257" stroke-width="0.700"/>
<path d="M760,34.0 h-1.300 v8 h1.300 M763.6,34.0 h1.300 v8 h-1.300" fill="none" stroke="#e9e9e9" stroke-width="0.7"/><circle cx="761.5" cy="36.4" r="1.200" fill="#4a9be6"/><circle cx="761.7" cy="39.6" r="1.100" fill="none" stroke="#c4c4c4" stroke-width="0.600"/><path d="M763.500,36.500 l3,1.500 l-3,1.500 z" fill="#e03030"/>
<path d="M760,46.6 h-1.300 v8 h1.300 M763.6,46.6 h1.300 v8 h-1.300" fill="none" stroke="#e9e9e9" stroke-width="0.7"/><circle cx="761.5" cy="49.0" r="1.200" fill="#4a9be6"/><circle cx="761.7" cy="52.2" r="1.100" fill="none" stroke="#c4c4c4" stroke-width="0.600"/><path d="M763,53.500 l3,-3" stroke="#f0c257" stroke-width="1.200"/><rect x="765.600" y="49.600" width="1.200" height="1.200" fill="#e03030"/>
<path d="M759.5,59.5 h-1.300 v8 h1.300 M763.1,59.5 h1.300 v8 h-1.300" fill="none" stroke="#e9e9e9" stroke-width="0.7"/><circle cx="761.0" cy="61.9" r="1.200" fill="#4a9be6"/><circle cx="761.2" cy="65.1" r="1.100" fill="none" stroke="#c4c4c4" stroke-width="0.600"/><path d="M763,62 v6 l1.500,-1.300 l1,2.200 l0.900,-0.400 l-1,-2.200 l2,-0.200 z" fill="#f4f4f4" stroke="#555" stroke-width="0.300"/>
<path d="M761.60,75.70 h4.0 l-2.0,2.2 z" fill="#f0f0f0"/>
<path d="M782.300,36.800 v5 M797,36.800 v5 M782.300,39.300 h14.700" stroke="#e9e9e9" stroke-width="0.7"/><path d="M783,39.300 l2,-1 v2 z M796.300,39.300 l-2,-1 v2 z" fill="#e9e9e9"/><rect x="782" y="43.200" width="15.200" height="3" fill="#f0c257"/><path d="M784,43.200 v1.500 M786,43.200 v1.500 M788,43.200 v1.500 M790,43.200 v1.500 M792,43.200 v1.500 M794,43.200 v1.500 M796,43.200 v1.500" stroke="#b08a30" stroke-width="0.400"/>
<path d="M788.10,61.15 h2.8 l-1.4,1.7 z" fill="#e8e8e8"/>
<rect x="812.800" y="36.800" width="5.600" height="4" fill="#e9e9e9"/><path d="M813,38.800 h5 M815,37 v4 M817,37 v4" stroke="#777" stroke-width="0.400"/><path d="M810.300,35.600 v4.600 l1.200,-1 l0.900,1.700 l0.700,-0.400 l-0.900,-1.700 h1.500 z" fill="#f4f4f4"/><path d="M813.800,33.800 l0.500,1.200 l1.200,0.500 l-1.200,0.500 l-0.500,1.200 l-0.500,-1.200 l-1.200,-0.500 l1.200,-0.500 z" fill="#f0c257"/>
<path d="M811.300,46.500 v8 M814.300,46.500 v8 M817,46.500 v4" stroke="#9ad0d0" stroke-width="0.700"/><rect x="810.600" y="47.300" width="1.200" height="1.200" fill="#30c030"/><rect x="816.400" y="47.300" width="1.200" height="1.200" fill="#30c030"/><rect x="810.600" y="52.500" width="1.200" height="1.200" fill="#30c030"/><path d="M814.600,49.300 v5 l1.300,-1.100 l1,1.900 l0.800,-0.400 l-1,-1.900 h1.700 z" fill="#f4f4f4"/>
<rect x="811.300" y="59.300" width="5.800" height="8.600" rx="0.500" fill="none" stroke="#e9e9e9" stroke-width="0.800"/><rect x="812.500" y="60.500" width="3.400" height="1.600" fill="#e9e9e9"/><path d="M812.500,63.600 h3.400 M812.500,65 h3.400 M812.500,66.400 h3.400" stroke="#e9e9e9" stroke-width="0.700" stroke-dasharray="0.8 0.5"/>
<path d="M805.80,75.70 h4.0 l-2.0,2.2 z" fill="#f0f0f0"/>
<path d="M829.300,35 h9.300 v13 h-9.300 z" fill="#d9b070"/><rect x="832" y="33.800" width="4" height="2" rx="0.500" fill="#e8e8e8"/><path d="M833,33.800 q1,-1.300 2,0 z" fill="#e8e8e8"/><path d="M833.300,39 h7.300 l3.200,3.200 v8.600 h-10.500 z" fill="#dcdcdc"/><path d="M840.600,39 v3.200 h3.200 z" fill="#f6f6f6"/><path d="M834.500,43 h7 M834.500,45 h7 M834.500,47 h7 M834.500,49 h7" stroke="#c4c4c4" stroke-width="0.500" stroke-dasharray="0.6 0.9"/>
<path d="M835.40,61.15 h2.8 l-1.4,1.7 z" fill="#e8e8e8"/>
<rect x="853.300" y="34.200" width="5" height="6.400" fill="none" stroke="#e9e9e9" stroke-width="0.700"/><path d="M854.300,36 h3 M854.300,37.600 h3 M854.300,39.200 h1.600" stroke="#e9e9e9" stroke-width="0.500"/><path d="M857,38.300 l3.400,3.600 M860.400,38.300 l-3.400,3.600" stroke="#e9e9e9" stroke-width="0.800"/>
<path d="M853.300,46.800 h3 l1.300,1.300 v5.200 h-4.300 z" fill="#c9c9c9"/><path d="M855.600,48.800 h3 l1.500,1.500 v5.600 h-4.500 z" fill="#e4e4e4"/>
<path d="M873,34.800 h7.600 v5.200 h9.300 v8 h-16.900 z" fill="#d6dad9"/><path d="M874.500,36.500 h5 M874.500,38.500 h5 M874.500,40.500 h5 M874.500,42.500 h14 M874.500,44.500 h14 M874.500,46.500 h14" stroke="#c2c8c6" stroke-width="0.500" stroke-dasharray="0.6 1.400"/>
<path d="M880.30,61.15 h2.8 l-1.4,1.7 z" fill="#e8e8e8"/><path d="M884.10,75.70 h4.0 l-2.0,2.2 z" fill="#f0f0f0"/><path d="M892.600,75.400 h2.600 v2.600 M895.200,78 l-2.400,-2.400" stroke="#cfcfcf" stroke-width="0.600" fill="none"/>
</svg>
</div><div class="pg" style="z-index:4">
<div class="abs" style="left:5px;top:82.700px;width:1015px;height:15px;background:#393939"></div>
<div class="abs" style="left:5px;top:82.700px;width:12px;height:13px;background:#303030"></div>
<div class="abs" style="left:5px;top:95.300px;width:1015px;height:2.450px;background:#606060;z-index:4"></div>
<svg width="1024" height="20" viewBox="0 80 1024 20" style="left:0;top:80px">
<path d="M13,95.700 Q16.5,95.200 17.8,91 Q19.2,84.400 23,83.900 H80 Q82,83.900 82,86 V95.700 Z" fill="#585858"/>
<path d="M83,95.700 V86.300 Q83,83.900 85.4,83.900 H150.6 Q153,83.900 153,86.300 V95.700 Z" fill="#545454"/>
<path d="M143.1,88.800 l2.800,2.800 M145.9,88.800 l-2.800,2.800" stroke="#343434" stroke-width="0.900"/>
<path d="M154,95.700 V86.300 Q154,83.900 156.4,83.900 H216.1 Q218.5,83.900 218.5,86.300 V95.700 Z" fill="#545454"/>
<path d="M209.1,88.800 l2.800,2.800 M211.9,88.800 l-2.800,2.800" stroke="#343434" stroke-width="0.900"/>
<path d="M219.5,95.700 V86.300 Q219.5,83.900 221.9,83.900 H282.1 Q284.5,83.900 284.5,86.300 V95.700 Z" fill="#545454"/>
<path d="M274.90000000000003,88.800 l2.800,2.800 M277.7,88.800 l-2.800,2.800" stroke="#343434" stroke-width="0.900"/>
<path d="M285.5,95.700 V86.300 Q285.5,83.900 287.9,83.900 H347.6 Q350,83.900 350,86.300 V95.700 Z" fill="#545454"/>
<path d="M340.40000000000003,88.800 l2.800,2.800 M343.2,88.800 l-2.800,2.800" stroke="#343434" stroke-width="0.900"/>
<path d="M351,95.700 V86.300 Q351,83.900 353.4,83.900 H413.6 Q416,83.900 416,86.300 V95.700 Z" fill="#545454"/>
<path d="M406.1,88.800 l2.800,2.800 M408.9,88.800 l-2.800,2.800" stroke="#343434" stroke-width="0.900"/>
<path d="M417,95.700 V86.300 Q417,83.900 419.4,83.900 H478.6 Q481,83.900 481,86.300 V95.700 Z" fill="#545454"/>
<path d="M471.6,88.800 l2.800,2.800 M474.4,88.800 l-2.800,2.800" stroke="#343434" stroke-width="0.900"/>
<path d="M482,95.700 V86.300 Q482,83.900 484.4,83.900 H544.6 Q547,83.900 547,86.300 V95.700 Z" fill="#545454"/>
<path d="M537.4,88.800 l2.800,2.800 M540.1999999999999,88.800 l-2.800,2.800" stroke="#343434" stroke-width="0.900"/>
<path d="M548,95.700 V86.300 Q548,83.900 550.4,83.900 H610.6 Q613,83.900 613,86.300 V95.700 Z" fill="#545454"/>
<path d="M603.6,88.800 l2.800,2.800 M606.4,88.800 l-2.800,2.800" stroke="#343434" stroke-width="0.900"/>
<path d="M614,95.700 V86.300 Q614,83.900 616.4,83.900 H676.6 Q679,83.900 679,86.300 V95.700 Z" fill="#545454"/>
<path d="M669.4,88.800 l2.800,2.800 M672.1999999999999,88.800 l-2.800,2.800" stroke="#343434" stroke-width="0.900"/>
<path d="M680,95.700 V86.300 Q680,83.900 682.4,83.900 H742.1 Q744.5,83.900 744.5,86.300 V95.700 Z" fill="#545454"/>
<path d="M734.9,88.800 l2.800,2.800 M737.6999999999999,88.800 l-2.800,2.800" stroke="#343434" stroke-width="0.900"/>
<path d="M745.5,95.700 V86.300 Q745.5,83.900 747.9,83.900 H806.6 Q809,83.900 809,86.300 V95.700 Z" fill="#545454"/>
<path d="M800.6,88.800 l2.800,2.800 M803.4,88.800 l-2.800,2.800" stroke="#343434" stroke-width="0.900"/>
<path d="M806.500,97.700 Q809.500,95.600 810.800,91 Q812.500,84.400 816,83.900 H872 Q875.500,84.400 877,91 Q878.500,95.600 881.500,97.700 Z" fill="#6f6f6f"/>
<path d="M866.400,88.600 l3.200,3.200 M869.600,88.600 l-3.200,3.200" stroke="#4c4c4c" stroke-width="1"/>
<path d="M883,85.300 H890.500 Q892.500,85.600 892.500,87.500 Q892.500,94.300 889.500,94.500 H885.500 Q883.300,94.300 882,91 Q880.600,86 883,85.300 Z" fill="#585858"/>
<path d="M886.800,87.400 v5 M884.300,89.900 h5" stroke="#ececec" stroke-width="1"/>
<path d="M1010,86.300 l2.300,2 l2.300,-2 M1010,89.600 l2.300,2 l2.300,-2" stroke="#e4e4e4" stroke-width="0.900" fill="none"/>
</svg>
<div class="t" style="left:22.50px;top:88px;font-size:6.5px;color:#cdcdcd;letter-spacing:-0.257px;">Start</div>
<div class="t" style="left:88.00px;top:88px;font-size:6.5px;color:#cdcdcd;letter-spacing:-0.112px;">monitor_lcd_3d_1</div>
<div class="t" style="left:159.00px;top:88px;font-size:6.5px;color:#cdcdcd;letter-spacing:-0.191px;">moto_2d_1</div>
<div class="t" style="left:225.00px;top:88px;font-size:6.5px;color:#cdcdcd;letter-spacing:-0.174px;">north_1</div>
<div class="t" style="left:290.80px;top:88px;font-size:6.5px;color:#cdcdcd;letter-spacing:-0.231px;">parking_1</div>
<div class="t" style="left:356.80px;top:88px;font-size:6.5px;color:#cdcdcd;letter-spacing:-0.096px;">pc-computer_1</div>
<div class="t" style="left:421.80px;top:88px;font-size:6.5px;color:#cdcdcd;letter-spacing:-0.327px;">Pensilina_3d_1</div>
<div class="t" style="left:487.50px;top:88px;font-size:6.5px;color:#cdcdcd;letter-spacing:-0.298px;">piano_3d_2</div>
<div class="t" style="left:553.30px;top:88px;font-size:6.5px;color:#cdcdcd;letter-spacing:-0.199px;">pianoforte_2d_1</div>
<div class="t" style="left:619.50px;top:88px;font-size:6.5px;color:#cdcdcd;letter-spacing:-0.031px;">Piatto Hi-Fi</div>
<div class="t" style="left:685.00px;top:88px;font-size:6.5px;color:#cdcdcd;letter-spacing:-0.187px;">plotter_1</div>
<div class="t" style="left:750.80px;top:88px;font-size:6.5px;color:#cdcdcd;letter-spacing:-0.222px;">plotter_3d_1</div>
<div class="t" style="left:816.30px;top:88px;font-size:6.5px;color:#ffffff;letter-spacing:-0.240px;">reception_3d_1</div>
</div><div id="draw">
<svg width="1015" height="424" viewBox="5 97 1015 424" style="left:0;top:0">
<!-- CABINET -->
<g id="cabinet">
<!-- feet -->
<g fill="#8f8f8f">
<rect x="95.0" y="359.8" width="3" height="6.200" rx="0.800"/>
<rect x="135.1" y="373.2" width="3" height="6.200" rx="0.800"/>
<rect x="203.7" y="337.7" width="3" height="6.200" rx="0.800"/>
<rect x="213.7" y="332.7" width="3" height="6.200" rx="0.800"/>
<rect x="284.1" y="297.2" width="3" height="6.200" rx="0.800"/>
<rect x="294.1" y="292.2" width="3" height="6.200" rx="0.800"/>
<rect x="364.1" y="257.0" width="3" height="6.200" rx="0.800"/>
</g>
<polygon points="88,282 135,301.2 135,374.7 88,359" fill="#5f6030"/>
<polygon points="135.4,301.2 373.3,177 373.3,255 135.4,374.7" fill="#77794a"/>
<polygon points="88,279 327.3,153.5 373.3,173.9 135.4,298" fill="#9b7536"/>
<polygon points="135.4,298 373.3,173.9 373.3,177 135.4,301.2" fill="#8c6a30"/>
<polygon points="88,279 135.4,298 135.4,301.2 88,282" fill="#7c5e2a"/>
<!-- door seams -->
<line x1="212.5" y1="261" x2="212.5" y2="300" stroke="#6f7145" stroke-width="0.6"/>
<line x1="292.5" y1="219" x2="292.5" y2="256" stroke="#6f6c40" stroke-width="0.8"/><line x1="292.5" y1="256" x2="292.5" y2="283" stroke="#6e5c32" stroke-width="0.9"/>
<!-- handles -->
<g stroke="#a9a9a9" stroke-width="1.300" stroke-linecap="round">
<line x1="171.5" y1="294" x2="172.3" y2="298"/><line x1="176.8" y1="291.5" x2="177.6" y2="295.5"/>
<line x1="251" y1="252.5" x2="251.8" y2="256.5"/><line x1="256.3" y1="250" x2="257.1" y2="254"/>
<line x1="331" y1="210.5" x2="331.8" y2="214.5"/><line x1="336.3" y1="208" x2="337.1" y2="212"/>
</g>
<path d="M334,274.500 q4,-1 7,-4 q4,-3 8,-2.500 q3,1 0,3 q-4,2.500 -9,1.500" fill="none" stroke="#9a8440" stroke-width="0.800"/>
</g>
<!-- PLANT -->
<g id="plant" fill="none" stroke="#20cc20" stroke-width="0.6" stroke-linejoin="round">
<path d="M397.8,231.2 L390.600,223.200 L388.400,215.300 L397.800,224.700 Z"/>
<path d="M397.8,231.2 L403.600,244.900 L406.500,247.100 L410.800,237.700 Z"/>
<path d="M397.8,231.2 L415.100,219.600 L436.800,221.100 L436.800,227.600 L418.800,236.200 Z"/>
<path d="M397.8,231.2 L399.200,218.900 L410.800,218.200 L418,219.600 Z"/>
<path d="M397.8,231.2 L374,225.400 M397.8,231.2 L374,250.700 L387.700,247.800 L397.800,242 Z"/>
<path d="M397.8,231.2 L436.8,221.1"/>
<path d="M397.8,231.2 L436.8,224.3"/>
<path d="M397.8,231.2 L436.8,227.6"/>
<path d="M397.8,231.2 L428,231.5"/>
<path d="M397.8,231.2 L418.8,236.2"/>
<path d="M397.8,231.2 L374,226.5"/>
<path d="M397.8,231.2 L374,231"/>
<path d="M397.8,231.2 L374,235.5"/>
<path d="M397.8,231.2 L374,240"/>
<path d="M397.8,231.2 L374,244.5"/>
<path d="M397.8,231.2 L375,249.5"/>
<path d="M397.8,231.2 L386,247.5"/>
<path d="M397.8,231.2 L410.8,218.2"/>
<path d="M397.8,231.2 L418,219.6"/>
<g stroke-width="0.5" stroke="#1cc21c"><ellipse cx="410.2" cy="228.9" rx="1.500" ry="0.800" transform="rotate(-15 410.2 228.9)"/><ellipse cx="413.8" cy="226.1" rx="1.500" ry="0.800" transform="rotate(-15 413.8 226.1)"/><ellipse cx="418.3" cy="226.8" rx="1.500" ry="0.800" transform="rotate(-15 418.3 226.8)"/><ellipse cx="421.9" cy="224.0" rx="1.500" ry="0.800" transform="rotate(-15 421.9 224.0)"/><ellipse cx="426.5" cy="224.7" rx="1.500" ry="0.800" transform="rotate(-15 426.5 224.7)"/><ellipse cx="430.1" cy="221.9" rx="1.500" ry="0.800" transform="rotate(-15 430.1 221.9)"/><ellipse cx="434.6" cy="222.6" rx="1.500" ry="0.800" transform="rotate(-15 434.6 222.6)"/><ellipse cx="407.3" cy="230.4" rx="1.500" ry="0.800" transform="rotate(-10 407.3 230.4)"/><ellipse cx="411.0" cy="227.9" rx="1.500" ry="0.800" transform="rotate(-10 411.0 227.9)"/><ellipse cx="415.4" cy="229.0" rx="1.500" ry="0.800" transform="rotate(-10 415.4 229.0)"/><ellipse cx="419.2" cy="226.5" rx="1.500" ry="0.800" transform="rotate(-10 419.2 226.5)"/><ellipse cx="423.6" cy="227.6" rx="1.500" ry="0.800" transform="rotate(-10 423.6 227.6)"/><ellipse cx="427.3" cy="225.1" rx="1.500" ry="0.800" transform="rotate(-10 427.3 225.1)"/><ellipse cx="431.7" cy="226.1" rx="1.500" ry="0.800" transform="rotate(-10 431.7 226.1)"/><ellipse cx="435.4" cy="223.6" rx="1.500" ry="0.800" transform="rotate(-10 435.4 223.6)"/><ellipse cx="410.1" cy="231.0" rx="1.500" ry="0.800" transform="rotate(-5 410.1 231.0)"/><ellipse cx="414.0" cy="228.8" rx="1.500" ry="0.800" transform="rotate(-5 414.0 228.8)"/><ellipse cx="418.2" cy="230.2" rx="1.500" ry="0.800" transform="rotate(-5 418.2 230.2)"/><ellipse cx="422.1" cy="228.1" rx="1.500" ry="0.800" transform="rotate(-5 422.1 228.1)"/><ellipse cx="426.3" cy="229.5" rx="1.500" ry="0.800" transform="rotate(-5 426.3 229.5)"/><ellipse cx="430.2" cy="227.3" rx="1.500" ry="0.800" transform="rotate(-5 430.2 227.3)"/><ellipse cx="434.4" cy="228.7" rx="1.500" ry="0.800" transform="rotate(-5 434.4 228.7)"/><ellipse cx="406.9" cy="232.2" rx="1.500" ry="0.800" transform="rotate(1 406.9 232.2)"/><ellipse cx="410.9" cy="230.4" rx="1.500" ry="0.800" transform="rotate(1 410.9 230.4)"/><ellipse cx="414.9" cy="232.3" rx="1.500" ry="0.800" transform="rotate(1 414.9 232.3)"/><ellipse cx="418.9" cy="230.5" rx="1.500" ry="0.800" transform="rotate(1 418.9 230.5)"/><ellipse cx="422.8" cy="232.3" rx="1.500" ry="0.800" transform="rotate(1 422.8 232.3)"/><ellipse cx="426.8" cy="230.6" rx="1.500" ry="0.800" transform="rotate(1 426.8 230.6)"/><ellipse cx="405.5" cy="232.1" rx="1.500" ry="0.800" transform="rotate(13 405.5 232.1)"/><ellipse cx="408.8" cy="234.8" rx="1.500" ry="0.800" transform="rotate(13 408.8 234.8)"/><ellipse cx="413.0" cy="233.9" rx="1.500" ry="0.800" transform="rotate(13 413.0 233.9)"/><ellipse cx="416.3" cy="236.5" rx="1.500" ry="0.800" transform="rotate(13 416.3 236.5)"/><ellipse cx="392.1" cy="231.0" rx="1.500" ry="0.800" transform="rotate(-169 392.1 231.0)"/><ellipse cx="388.2" cy="228.4" rx="1.500" ry="0.800" transform="rotate(-169 388.2 228.4)"/><ellipse cx="383.6" cy="229.3" rx="1.500" ry="0.800" transform="rotate(-169 383.6 229.3)"/><ellipse cx="379.7" cy="226.7" rx="1.500" ry="0.800" transform="rotate(-169 379.7 226.7)"/><ellipse cx="375.1" cy="227.6" rx="1.500" ry="0.800" transform="rotate(-169 375.1 227.6)"/><ellipse cx="389.3" cy="232.0" rx="1.500" ry="0.800" transform="rotate(-180 389.3 232.0)"/><ellipse cx="385.1" cy="230.2" rx="1.500" ry="0.800" transform="rotate(-180 385.1 230.2)"/><ellipse cx="380.8" cy="232.0" rx="1.500" ry="0.800" transform="rotate(-180 380.8 232.0)"/><ellipse cx="376.6" cy="230.1" rx="1.500" ry="0.800" transform="rotate(-180 376.6 230.1)"/><ellipse cx="392.4" cy="233.1" rx="1.500" ry="0.800" transform="rotate(170 392.4 233.1)"/><ellipse cx="387.9" cy="232.1" rx="1.500" ry="0.800" transform="rotate(170 387.9 232.1)"/><ellipse cx="383.9" cy="234.6" rx="1.500" ry="0.800" transform="rotate(170 383.9 234.6)"/><ellipse cx="379.4" cy="233.6" rx="1.500" ry="0.800" transform="rotate(170 379.4 233.6)"/><ellipse cx="375.4" cy="236.2" rx="1.500" ry="0.800" transform="rotate(170 375.4 236.2)"/><ellipse cx="390.9" cy="234.7" rx="1.500" ry="0.800" transform="rotate(160 390.9 234.7)"/><ellipse cx="386.7" cy="234.4" rx="1.500" ry="0.800" transform="rotate(160 386.7 234.4)"/><ellipse cx="383.7" cy="237.4" rx="1.500" ry="0.800" transform="rotate(160 383.7 237.4)"/><ellipse cx="379.5" cy="237.0" rx="1.500" ry="0.800" transform="rotate(160 379.5 237.0)"/><ellipse cx="376.5" cy="240.0" rx="1.500" ry="0.800" transform="rotate(160 376.5 240.0)"/><ellipse cx="389.1" cy="235.0" rx="1.500" ry="0.800" transform="rotate(151 389.1 235.0)"/><ellipse cx="386.3" cy="238.6" rx="1.500" ry="0.800" transform="rotate(151 386.3 238.6)"/><ellipse cx="381.9" cy="239.1" rx="1.500" ry="0.800" transform="rotate(151 381.9 239.1)"/><ellipse cx="379.1" cy="242.7" rx="1.500" ry="0.800" transform="rotate(151 379.1 242.7)"/><ellipse cx="374.6" cy="243.1" rx="1.500" ry="0.800" transform="rotate(151 374.6 243.1)"/><ellipse cx="391.5" cy="237.4" rx="1.500" ry="0.800" transform="rotate(141 391.5 237.4)"/><ellipse cx="386.9" cy="238.8" rx="1.500" ry="0.800" transform="rotate(141 386.9 238.8)"/><ellipse cx="384.5" cy="243.0" rx="1.500" ry="0.800" transform="rotate(141 384.5 243.0)"/><ellipse cx="380.0" cy="244.4" rx="1.500" ry="0.800" transform="rotate(141 380.0 244.4)"/><ellipse cx="377.6" cy="248.5" rx="1.500" ry="0.800" transform="rotate(141 377.6 248.5)"/><ellipse cx="395.2" cy="236.3" rx="1.500" ry="0.800" transform="rotate(126 395.2 236.3)"/><ellipse cx="391.2" cy="238.8" rx="1.500" ry="0.800" transform="rotate(126 391.2 238.8)"/><ellipse cx="390.1" cy="243.4" rx="1.500" ry="0.800" transform="rotate(126 390.1 243.4)"/><ellipse cx="386.0" cy="245.9" rx="1.500" ry="0.800" transform="rotate(126 386.0 245.9)"/><ellipse cx="402.8" cy="224.9" rx="1.500" ry="0.800" transform="rotate(-45 402.8 224.9)"/><ellipse cx="406.9" cy="223.4" rx="1.500" ry="0.800" transform="rotate(-45 406.9 223.4)"/><ellipse cx="408.5" cy="219.3" rx="1.500" ry="0.800" transform="rotate(-45 408.5 219.3)"/><ellipse cx="402.0" cy="227.7" rx="1.500" ry="0.800" transform="rotate(-30 402.0 227.7)"/><ellipse cx="406.5" cy="227.2" rx="1.500" ry="0.800" transform="rotate(-30 406.5 227.2)"/><ellipse cx="409.3" cy="223.6" rx="1.500" ry="0.800" transform="rotate(-30 409.3 223.6)"/><ellipse cx="413.8" cy="223.1" rx="1.500" ry="0.800" transform="rotate(-30 413.8 223.1)"/><ellipse cx="416.5" cy="219.4" rx="1.500" ry="0.800" transform="rotate(-30 416.5 219.4)"/></g>
</g>

<!-- DESK -->
<defs>
<linearGradient id="wallg" gradientUnits="userSpaceOnUse" x1="424" y1="0" x2="660" y2="0">
<stop offset="0.0000" stop-color="#7d7042"/><stop offset="0.0339" stop-color="#7a6d3f"/><stop offset="0.0890" stop-color="#776a3c"/><stop offset="0.1780" stop-color="#786b3d"/><stop offset="0.1822" stop-color="#75683b"/><stop offset="0.4237" stop-color="#74673a"/><stop offset="0.4280" stop-color="#8a7c4e"/><stop offset="0.4703" stop-color="#8e8052"/><stop offset="0.4746" stop-color="#94865a"/><stop offset="0.5254" stop-color="#978959"/><stop offset="0.5297" stop-color="#9f9163"/><stop offset="0.5763" stop-color="#a39567"/><stop offset="0.5805" stop-color="#a99b6d"/><stop offset="0.7373" stop-color="#a89a6c"/><stop offset="0.7458" stop-color="#a09264"/><stop offset="0.7924" stop-color="#9c8e60"/><stop offset="0.8008" stop-color="#8d8053"/><stop offset="1.0000" stop-color="#8a7d50"/>
</linearGradient>
<linearGradient id="baseg" gradientUnits="userSpaceOnUse" x1="424" y1="0" x2="660" y2="0">
<stop offset="0.0000" stop-color="#606060"/><stop offset="0.1737" stop-color="#5c5c5c"/><stop offset="0.1822" stop-color="#505050"/><stop offset="0.4025" stop-color="#4f4f4f"/><stop offset="0.4110" stop-color="#686868"/><stop offset="0.5424" stop-color="#6c6c6c"/><stop offset="0.5508" stop-color="#7c7c7c"/><stop offset="0.6398" stop-color="#868686"/><stop offset="0.7797" stop-color="#828282"/><stop offset="0.7924" stop-color="#6e6e6e"/><stop offset="1.0000" stop-color="#6b6b6b"/>
</linearGradient>
</defs>
<g id="desk">
<!-- pedestal under table -->
<rect x="516" y="226" width="10" height="22" fill="#6e6e6e"/>
<rect x="516" y="226" width="4" height="22" fill="#858585"/>
<!-- big table + shelf + lower counter -->
<path id="tabletop" d="M512.8,168.4 L673.8,230.3 L712.8,245.6 L750.3,227.4 L786.4,243.3 L627.5,327.1 Q612,336 602,339.5 Q584,347 564,351.5 Q545,356 523.3,357 L523.3,334 L526,331 L546,327 L590,304.5 L609.8,293.3 Q627,285 632,280 Q634.5,276 631,271.4 Q627,267.5 621.2,264.9 L592,255.2 L583.2,252.8 L553.4,242 L526.4,233.9 L499.3,228.5 L477.7,220.9 Q466,217.5 462.8,215 Q459,211 459.5,206.8 Q459.5,201 461.4,196 Q465,189 472.2,183.8 Q481,177 491.2,173 Q501,169.5 512.8,168.4 Z" fill="#9b7737"/>
<!-- table thickness (lower edge darker band) -->
<path d="M459.5,206.8 Q459,211 462.8,215 Q466,217.5 477.7,220.9 L499.3,228.5 L526.4,233.9 L553.4,242 L583.2,252.8 L592,255.2 L621.2,264.9 Q627,267.5 631,271.4" fill="none" stroke="#86662d" stroke-width="2"/>
<!-- seam lines on table -->
<line x1="533" y1="176.3" x2="462.8" y2="213.2" stroke="#c9b184" stroke-width="0.7"/>
<line x1="673.8" y1="230.8" x2="621" y2="261" stroke="#a58445" stroke-width="1.6"/>
<line x1="673.8" y1="230.5" x2="712.8" y2="245.8" stroke="#a88546" stroke-width="1"/>
<line x1="590" y1="311" x2="627.5" y2="327" stroke="#a68444" stroke-width="0.9"/>
</g>

<g id="inner">
<!-- dark desk unit inside cutout -->
<polygon points="569,265 592,256 631,275.5 633,278 630,282 606.6,295.5 590,304.5 580.6,301.5 569,296" fill="#454545"/>
<polygon points="569,265 592,256 631,275.5 608,284" fill="#4b4b4b"/>
<polygon points="608,284 631,275.5 633,278 630,282 608.5,294.5" fill="#555555"/>
<polygon points="569,265 575,267 575,300 569,296" fill="#3c3c3c"/>
<!-- armrest of chair 2 (right) -->
<polygon points="580,274 603,283 603,289 580,280" fill="#5e5e5e"/>
<polygon points="582,270 584,270 584,279 582,278" fill="#8a8a8a"/>
<polygon points="601,281 604,282.5 604,291 601,290" fill="#8a8a8a"/>
<polygon points="581,280 590,283.5 586,300 583,299" fill="#555"/>
<!-- chair1 legs / base -->
<polygon points="466,239 478,236 478,240 468,243" fill="#5a5a5a"/>
<polygon points="467,241 470,240 470,272 467,270" fill="#4e4e4e"/>
<polygon points="536,256 548,247 552,250 541,262" fill="#5c5c5c"/>
<polygon points="468,296 486,286 492,289 474,300" fill="#666"/>
<polygon points="501,291 513,291 513,308 501,308" fill="#5e5e5e"/>
<polygon points="503,291 506,291 506,306 503,306" fill="#7d7d7d"/>
<polygon points="501,300 514,300 515,311 500,311" fill="#5a5a5a"/>
<g stroke="#8c8c8c" stroke-width="1.7" fill="none">
<line x1="504" y1="296" x2="480" y2="316"/><line x1="505" y1="298" x2="494" y2="318"/><line x1="510" y1="298" x2="517" y2="316"/><line x1="512" y1="296" x2="524" y2="306"/>
</g>
<rect x="506.5" y="313" width="3" height="3" fill="#d8d8d8"/>
<!-- chair 1 back -->
<path d="M470.9,240.6 Q473,238 478.5,238.4 L521.8,247 Q527,248.5 527,252.5 L527,291.5 L506.6,291.5 L472,281.7 Q469.6,272 469.8,263.3 Z" fill="#990000"/>
<path d="M521.8,247 Q527,248.5 527,252.5 L527,291.5 L523.5,291.5 L523.5,249 Z" fill="#c02020"/>
<!-- chair 2 -->
<path d="M524.5,256 L533,262.500 L543.4,263.3 L544.5,303.4 L545.6,327 L532.6,324 L525,321 Z" fill="#8e0000"/>
<path d="M558.6,300 L580,299 L590,304.4 L545.6,327.2 L532.6,324 L544.5,303.4 Z" fill="#c40000"/>
<path d="M543.4,263.3 L563,256.8 Q567.5,257.5 568.3,261 L569.4,293.6 L558.6,300 L544.5,303.4 Z" fill="#c23b3b"/>
<!-- chair 2 left armrest -->
<polygon points="531,297 553,306 553,312 531,303" fill="#666"/>
<polygon points="532,294 534,294.5 534,304 532,303" fill="#8a8a8a"/>
<polygon points="551,305 554,306.5 554,315 551,314" fill="#8f8f8f"/>
<polygon points="531,303 541,307 537,326 533,325" fill="#5a5a5a"/>
<rect x="536.5" y="325.5" width="3" height="2.5" fill="#d0d0d0"/>
</g>
<g id="walls">
<!-- rim high part -->
<path d="M424.4,285.4 Q426,283 430,283.2 L435.7,284.4 Q440,293 447.7,299.2 Q455,305 464.9,309.5 Q475,314 485.5,316.3 Q498,319 513,319.8 L525,320.8 L525,327 L499.2,324.9 Q488,323.5 478.6,321.5 Q469,319 461.5,316.3 Q452,312.5 444.3,307.7 Q436,302 430.6,295.7 Q426.5,290.5 424.4,285.4 Z" fill="#6c6c6c"/>
<g fill="none" stroke="#8e8e8e" stroke-width="0.6">
<ellipse cx="430.5" cy="287.5" rx="3.2" ry="2"/><ellipse cx="435" cy="293.5" rx="3.2" ry="2"/><ellipse cx="440.5" cy="299" rx="3.2" ry="2"/><ellipse cx="447" cy="304" rx="3.2" ry="2"/><ellipse cx="454" cy="308" rx="3.2" ry="2"/><ellipse cx="461.5" cy="311.5" rx="3.2" ry="2"/><ellipse cx="469.5" cy="314.5" rx="3.2" ry="2"/><ellipse cx="478" cy="317" rx="3.2" ry="2"/><ellipse cx="487" cy="319" rx="3.2" ry="2"/><ellipse cx="496" cy="320.5" rx="3.2" ry="2"/><ellipse cx="505" cy="321.5" rx="3.2" ry="2"/><ellipse cx="514" cy="322.5" rx="3.2" ry="2"/>
</g>
<!-- wall front: curved + straight -->
<path d="M424.4,285.4 Q426.5,290.5 430.6,295.7 Q436,302 444.3,307.7 Q452,312.5 461.5,316.3 Q469,319 478.6,321.5 Q488,323.5 499.2,324.9 L524,326.6 L524,364.4 Q545,363 564.4,358.5 Q584,354 602.2,347.2 Q612,343 620,338.6 L628,333.5 L775,257.8 L775.6,338 L623,415 Q612,421 600,425 Q582,432 562,436 Q543,440 524,440 Q505,440 486,436 Q465,431 448,423 Q432,414 425,404 Z" fill="url(#wallg)"/>
<polygon points="519.8,320.5 525,320.8 525,339 519.8,337" fill="#6a6a6a"/>
<!-- base -->
<path d="M425,404 Q432,414 448,423 Q465,431 486,436 Q505,440 524,440 Q543,440 562,436 Q582,432 600,425 Q612,421 623,415 L775.6,338 L775.6,359 L623,438 Q612,444 600.4,447.6 Q582,454 562,457 Q543,462 524,463 Q505,463.5 486,461 Q465,456 448,447.6 Q430,437 425,423 Z" fill="url(#baseg)"/>
<path d="M425,423 Q430,437 448,447.6 Q465,456 486,461 Q505,463.5 524,463" fill="none" stroke="#c9a63c" stroke-width="0.7"/>
<polygon points="772,258 775.600,256 775.600,359.200 772,361" fill="#6b6b6b"/>
<!-- lower rim under counter edge -->
<path d="M523.3,357 Q545,356 564,351.5 Q584,347 602,339.5 Q612,336 627.5,327.1 L628,333.5 L620,338.6 Q612,343 602.2,347.2 Q584,354 564.4,358.5 Q545,363 523.3,364.4 Z" fill="#707070"/>
<g fill="none" stroke="#8e8e8e" stroke-width="0.6">
<ellipse cx="529" cy="360.5" rx="3" ry="1.8"/><ellipse cx="538" cy="359.8" rx="3" ry="1.8"/><ellipse cx="547" cy="358.6" rx="3" ry="1.8"/><ellipse cx="556" cy="357" rx="3" ry="1.8"/><ellipse cx="565" cy="355" rx="3" ry="1.8"/><ellipse cx="574" cy="352.8" rx="3" ry="1.8"/><ellipse cx="583" cy="350.2" rx="3" ry="1.8"/><ellipse cx="592" cy="347.2" rx="3" ry="1.8"/><ellipse cx="601" cy="343.8" rx="3" ry="1.8"/><ellipse cx="610" cy="340" rx="3" ry="1.8"/>
</g>
<path d="M543,339 l3,1.200 M545,341 l2,-1.500 M592,327.500 l2.500,0.800 M596,326 l1.500,1" stroke="#4a4030" stroke-width="0.800" fill="none"/>
<!-- gray band under straight shelf -->
<polygon points="627.5,329.5 786.4,245.8 786.4,247.5 775,254 775,257.8 628,333.5" fill="#6e6e6e"/>
<polygon points="627.5,327.1 786.4,243.3 786.4,245.8 627.5,329.6" fill="#87672d"/>
<g fill="#9a9a9a"><rect x="682.5" y="299" width="1.6" height="5"/><rect x="697" y="291.5" width="1.6" height="5"/><rect x="762.5" y="257" width="1.8" height="6"/></g>
</g>

<!-- VIEWCUBE -->
<g id="viewcube">
<path d="M940.4,170.500 a34.700,18 0 1,0 69.400,0 a34.700,18 0 1,0 -69.400,0 z M948.400,169.600 a27,12 0 1,1 54,0 a27,12 0 1,1 -54,0 z" fill="#4c4f54" fill-rule="evenodd"/>
<ellipse cx="976" cy="171" rx="19" ry="8" fill="#1a2027"/>
<g font-family="Liberation Sans, sans-serif" font-size="8.600" font-weight="bold" fill="#c6c6c6" text-anchor="middle">
<text x="951.7" y="158.5" transform="rotate(-55 951.7 156.7)">S</text>
<text x="950.6" y="183.6" transform="rotate(25 950.6 181.6)">E</text>
<text x="1002.6" y="180.6" transform="rotate(-30 1002.6 178.4)">N</text>
<text x="996" y="157.6" transform="rotate(30 996 155.6)">W</text>
</g>
<polygon points="957,143.7 974.4,136.2 993.9,143.7 976.6,150.2" fill="#c6c6c6"/>
<polygon points="957,143.7 976.6,150.2 976.6,174 958.2,164.3" fill="#bdbdbd"/>
<polygon points="976.6,150.2 993.9,143.7 992.8,164.3 976.6,174" fill="#adadad"/>
<g stroke="#555" stroke-width="0.6" stroke-dasharray="2 1" fill="none">
<line x1="976.6" y1="150.2" x2="976.6" y2="160"/><line x1="976.6" y1="150.2" x2="968" y2="147.2"/><line x1="976.6" y1="150.2" x2="985" y2="147"/>
</g>
<g font-family="Liberation Sans, sans-serif" font-weight="bold" fill="#3c3c3c" text-anchor="middle">
<text x="966.5" y="162" font-size="4.6" transform="matrix(1,0.42,0,1.5,0,-486.93)" >RIGHT</text>
<text x="985" y="162" font-size="4.6" transform="matrix(1,-0.5,0,1.5,0,411.5)">BACK</text>
<text x="975.5" y="144.5" font-size="3.6" transform="rotate(-22 975.5 143.5)">TOP</text>
</g>
<rect x="963.6" y="201.6" width="24.4" height="7.8" rx="2" fill="#8c8c8c" stroke="#b4b4b4" stroke-width="0.6"/>
<text x="966.5" y="207.8" font-family="Liberation Sans, sans-serif" font-size="6" fill="#2c2c2c">WCS</text>
<path d="M981.5,204.5 l3,0 l-1.5,2.2 z" fill="#aaa"/>
</g>
<!-- viewport controls -->
<g fill="#f2f2f2" stroke="none">
<rect x="987.600" y="106.600" width="4.400" height="1.500"/>
<path d="M997.3,103.8 h4 v4.6 h-4 z M998.3,105.2 v2.2 h2 v-2.2 z M998.6,102.6 h4 v4.4 h-1 v-3.3 h-3 z" fill-rule="evenodd"/>
<path d="M1008.900,104.200 l3.800,3.800 M1012.700,104.200 l-3.800,3.800" stroke="#f2f2f2" stroke-width="1.200" fill="none"/>
</g>
<!-- NAVBAR -->
<g id="navbar">
<rect x="1000.3" y="210.6" width="17.7" height="113" rx="2" fill="#5b6068"/>
<circle cx="1014.6" cy="214" r="1.1" fill="none" stroke="#8d9299" stroke-width="0.5"/>
<circle cx="1014.6" cy="320.5" r="1.1" fill="none" stroke="#8d9299" stroke-width="0.5"/>
<g fill="none" stroke="#757a82" stroke-width="0.9">
<path d="M1003.5,221 h9 q2.5,0 2.5,2.5 v4 q0,5 -6,5 q-6,0 -6,-5 z"/>
<circle cx="1009" cy="227" r="2.5"/>
<path d="M1005,252 q-2,-3 -1,-5 l2,2 v-6 q1,-1 1.6,0 v-1.5 q1,-1 1.8,0 v1 q1,-1 1.8,0 v1.5 q1,-0.8 1.6,0.2 v5 q0,3 -2,4.5 h-5 z"/>
<path d="M1003.5,259 l9,9 M1012.500,259 l-9,9"/>
<circle cx="1012.300" cy="268.2" r="2.2" fill="#5b6068"/><path d="M1013.900,269.800 l1.8,1.800"/>
<ellipse cx="1008.4" cy="285" rx="5.5" ry="2.2"/>
<path d="M1007.400,278.500 h2.400 v11.500 h-2.400 z" fill="#5b6068"/>
<rect x="1003" y="301.500" width="2.600" height="2.600"/><rect x="1006.6" y="301.500" width="2.600" height="2.600"/><rect x="1010.2" y="301.500" width="2.600" height="2.600"/>
<rect x="1003" y="306" width="9.800" height="7"/>
</g>
<path d="M1006,307.700 l4,1.800 l-4,1.800 z" fill="#7c8188"/>
<g fill="#7c8188"><path d="M1007.800,237 h2.400 l-1.200,1.400 z"/><path d="M1007.800,275 h2.400 l-1.200,1.400 z"/><path d="M1007.800,295 h2.400 l-1.200,1.400 z"/></g>
</g>
<!-- UCS ICON -->
<g id="ucs">
<line x1="32.300" y1="493.300" x2="32.100" y2="471.400" stroke="#7d8ba6" stroke-width="2"/>
<line x1="32.300" y1="493.300" x2="32.100" y2="471.400" stroke="#b8c0d0" stroke-width="0.7" stroke-dasharray="0.6 0.6"/>
<line x1="32.500" y1="493.500" x2="15.200" y2="502.300" stroke="#b65252" stroke-width="2"/>
<line x1="32.500" y1="493.500" x2="15.200" y2="502.300" stroke="#e09a9a" stroke-width="0.7" stroke-dasharray="0.6 0.6"/>
<line x1="32.500" y1="493.500" x2="51.300" y2="501.700" stroke="#3d9a3d" stroke-width="2"/>
<line x1="32.500" y1="493.500" x2="51.300" y2="501.700" stroke="#15d615" stroke-width="0.8" stroke-dasharray="0.8 0.6"/>
<g font-family="Liberation Sans, sans-serif" font-size="8.5">
<text x="31.800" y="469.500" fill="#23509a" transform="skewX(-8)" style="transform-origin:35px 466px">Z</text>
<text x="13.500" y="500.500" fill="#8c1a1a" font-size="8" transform="rotate(-8 16.600 497.700)">X</text>
<text x="50.300" y="499" fill="#149014" font-size="8" transform="rotate(10 53.400 496.200)">Y</text>
</g>
</g>
</svg>
<div class="t" style="left:2px;top:6px;font-size:6.6px;color:#d8d8d8;letter-spacing:-0.05px">[&minus;][Custom View][Gouraud]</div>
</div>
<div id="cmdhist">
<div class="hl" style="top:474px;width:420px;">Autodesk DWG.&nbsp; This file is a TrustedDWG last saved by an Autodesk application or Autodesk licensed application.</div>
<div class="hl b" style="top:485.5px;">Command:</div>
<div class="hl b" style="top:496px;">Command:</div>
</div>
<div id="cmdbar">
<div id="cmdgrip">
<svg width="29" height="14" viewBox="0 0 29 14" style="left:0;top:0">
<g fill="#8a8a8a"><rect x="1.5" y="2" width="0.8" height="10"/><rect x="3" y="2" width="0.8" height="10"/></g>
<path d="M8,5 l4,4 M12,5 l-4,4" stroke="#e8e8e8" stroke-width="1.1" fill="none"/>
<path d="M17.800,11 l4.600,-4.600" stroke="#e8e8e8" stroke-width="1.300" stroke-linecap="round"/><path d="M24.800,3.600 a2,2 0 1 0 1.800,1.800 l-1.500,1.100 l-1.300,-1.300 z" fill="#e8e8e8"/>
</svg>
</div>
<div id="cmdin">
<svg width="20" height="14" viewBox="0 0 20 14" style="left:0;top:0">
<rect x="3.500" y="3.500" width="7.500" height="6.500" fill="none" stroke="#444" stroke-width="0.9"/>
<path d="M5,5.500 l1.800,1.300 l-1.800,1.300" fill="none" stroke="#444" stroke-width="0.7"/><path d="M7.500,8.500 h2.300" stroke="#444" stroke-width="0.7"/>
<path d="M12.300,6 h2.600 l-1.300,1.500 z" fill="#444"/>
</svg>
<div class="t" style="left:20px;top:4.500px;font-family:'Liberation Mono',monospace;font-style:italic;font-size:6.300px;color:#7a7a7a;">Type a command</div>
<svg width="8" height="14" viewBox="0 0 8 14" style="left:568px;top:0"><path d="M1.500,8 h3.400 l-1.700,-2 z" fill="#333"/></svg>
</div>
</div>
<div class="pg" style="z-index:20"><div class="t" style="left:854.10px;top:502px;font-size:10.5px;color:rgba(235,238,242,0.52);letter-spacing:0.022px;">Activate Windows</div><div class="t" style="left:854.10px;top:516px;font-size:8px;color:rgba(235,238,242,0.46);letter-spacing:-0.008px;">Go to Settings to activate Windows.</div></div>
<div id="status">
<svg width="140" height="12" viewBox="0 0 140 12" style="left:0;top:0">
<path d="M4,0 Q7,0.500 8,4 Q9,9 12,9.500 L34,9.500 Q36.500,9 37.500,5 Q38.500,0.500 40.500,0 Z" fill="#6e6e6e"/>
<path d="M40.500,0 Q38.500,0.500 37.500,5 Q36.500,9 39,9.500 L68.500,9.500 Q71,9 72,5 Q73,0.500 75,0 Z" fill="#4f4f4f"/>
<path d="M75,0 Q73,0.500 72,5 Q71,9 73.500,9.500 L103.500,9.500 Q106,9 107,5 Q108,0.500 110,0 Z" fill="#4f4f4f"/>
<path d="M113,0.800 L122.500,0.800 Q121,1.300 120.300,5 Q119.500,8.500 118,8.800 L108.500,8.800 Q110.500,8.300 111.200,5 Q112,1.300 113,0.800 Z" fill="#555"/>
<path d="M113.500,4.800 h4 M115.500,2.800 v4" stroke="#e0e0e0" stroke-width="0.9"/>
</svg>
<div class="t" style="left:12.800px;top:1.500px;font-size:6.600px;font-weight:bold;color:#fff;">Model</div>
<div class="t" style="left:43.800px;top:1.500px;font-size:6.300px;color:#c4c4c4;">Layout1</div>
<div class="t" style="left:78.600px;top:1.500px;font-size:6.300px;color:#c4c4c4;">Layout2</div>
<svg width="305" height="15" viewBox="715 531.500 305 15" style="left:710px;top:10.500px">
<rect x="719.400" y="532" width="299.600" height="14.500" rx="1" fill="#4a4a4a" stroke="#5c5c5c" stroke-width="0.6"/>
<line x1="745.5" y1="532.500" x2="745.5" y2="546" stroke="#383838" stroke-width="0.8"/>
<line x1="781.4" y1="532.500" x2="781.4" y2="546" stroke="#383838" stroke-width="0.8"/>
<line x1="870.6" y1="532.500" x2="870.6" y2="546" stroke="#383838" stroke-width="0.8"/>
<line x1="928" y1="532.500" x2="928" y2="546" stroke="#383838" stroke-width="0.8"/>
<line x1="950" y1="532.500" x2="950" y2="546" stroke="#383838" stroke-width="0.8"/>
<line x1="964" y1="532.500" x2="964" y2="546" stroke="#383838" stroke-width="0.8"/>
<line x1="979.3" y1="532.500" x2="979.3" y2="546" stroke="#383838" stroke-width="0.8"/>
<line x1="992" y1="532.500" x2="992" y2="546" stroke="#383838" stroke-width="0.8"/>
<rect x="795" y="533.300" width="11.5" height="12" fill="#5b8ccc"/>
<rect x="837" y="533.300" width="12.0" height="12" fill="#5b8ccc"/>
<rect x="850" y="533.300" width="12.0" height="12" fill="#5b8ccc"/>
<rect x="872.6" y="533.300" width="11.4" height="12" fill="#5b8ccc"/>
<text x="722" y="541.700" font-family="Liberation Sans, sans-serif" font-size="6.300" fill="#f0f0f0" textLength="21" lengthAdjust="spacingAndGlyphs">MODEL</text>
<path d="M750.500,535 v8.500 M753,535 v8.500 M755.500,535 v8.500 M748.800,536.700 h8.500 M748.800,539.200 h8.500 M748.800,541.700 h8.500" stroke="#e0e0e0" stroke-width="0.7" fill="none"/>
<g fill="#cfcfcf"><rect x="762.5" y="536" width="1" height="1"/><rect x="762.5" y="539" width="1" height="1"/><rect x="762.5" y="542" width="1" height="1"/><rect x="765.5" y="536" width="1" height="1"/><rect x="765.5" y="539" width="1" height="1"/><rect x="765.5" y="542" width="1" height="1"/><rect x="768.5" y="536" width="1" height="1"/><rect x="768.5" y="539" width="1" height="1"/><rect x="768.5" y="542" width="1" height="1"/></g>
<path d="M774.4,538.5 h3.200 l-1.600,1.900 z" fill="#e6e6e6"/>
<path d="M785,535 v8.500 h8" stroke="#d8d8d8" stroke-width="0.9" fill="none"/><path d="M785,540.500 h2.500 v3" stroke="#d8d8d8" stroke-width="0.6" fill="none"/>
<path d="M804,537.200 a3.600,3.600 0 1,0 0.300,3.600 M800.700,539.200 h4.500 M800.700,539.200 l2.800,-3" stroke="#fff" stroke-width="0.9" fill="none"/>
<path d="M809.4,538.5 h3.200 l-1.600,1.900 z" fill="#e6e6e6"/>
<path d="M821.500,534.500 v10" stroke="#7fc6c6" stroke-width="0.8"/><path d="M818.500,535.500 l7,8" stroke="#c8b08a" stroke-width="0.8"/><circle cx="821.500" cy="539" r="0.9" fill="#e8e8e8"/>
<path d="M830.4,538.5 h3.200 l-1.600,1.900 z" fill="#e6e6e6"/>
<path d="M839.500,543.500 h8 M839.500,543.500 l7.500,-7" stroke="#fff" stroke-width="0.9" fill="none"/><rect x="842.500" y="540" width="1.500" height="1.500" fill="#fff"/>
<rect x="853.500" y="536.500" width="6.500" height="6.500" fill="none" stroke="#fff" stroke-width="0.9"/><rect x="852" y="535" width="2.800" height="2.800" fill="#5b8ccc" stroke="#fff" stroke-width="0.6"/>
<path d="M864.7,538.5 h3.200 l-1.600,1.900 z" fill="#e6e6e6"/>
<path d="M877.5,534.600 v3.600 l-3.400,5.600 M877.5,538.200 l3.400,5.600 M875.2,540 l2.300,-1.600 l2.300,1.600" stroke="#fff" stroke-width="1.150" fill="none" stroke-linecap="round" stroke-linejoin="round"/>
<rect x="880" y="534.500" width="2.500" height="2" fill="none" stroke="#fff" stroke-width="0.5"/>
<path d="M890.2,534.600 v3.600 l-3.400,5.600 M890.2,538.200 l3.400,5.600 M887.9000000000001,540 l2.300,-1.600 l2.300,1.600" stroke="#e8e8e8" stroke-width="1.150" fill="none" stroke-linecap="round" stroke-linejoin="round"/>
<path d="M893.500,534.500 v3 M892,536 h3" stroke="#e8e8e8" stroke-width="0.7"/>
<path d="M903.8,534.600 v3.600 l-3.400,5.600 M903.8,538.200 l3.400,5.600 M901.5,540 l2.300,-1.600 l2.300,1.600" stroke="#e8e8e8" stroke-width="1.150" fill="none" stroke-linecap="round" stroke-linejoin="round"/>
<text x="912.800" y="541.600" font-family="Liberation Sans, sans-serif" font-size="6.500" fill="#e8e8e8" textLength="7.500" lengthAdjust="spacingAndGlyphs">1:1</text>
<path d="M922.2,538.5 h3.200 l-1.600,1.900 z" fill="#e6e6e6"/>
<path d="M939.97,538.67 L939.97,539.73 L938.80,539.98 L938.50,540.70 L939.15,541.70 L938.40,542.45 L937.40,541.80 L936.68,542.10 L936.43,543.27 L935.37,543.27 L935.12,542.10 L934.40,541.80 L933.40,542.45 L932.65,541.70 L933.30,540.70 L933.00,539.98 L931.83,539.73 L931.83,538.67 L933.00,538.42 L933.30,537.70 L932.65,536.70 L933.40,535.95 L934.40,536.60 L935.12,536.30 L935.37,535.13 L936.43,535.13 L936.68,536.30 L937.40,536.60 L938.40,535.95 L939.15,536.70 L938.50,537.70 L938.80,538.42 Z M937.400,539.200 a1.500,1.500 0 1,0 -3,0 a1.500,1.500 0 1,0 3,0 z" fill="#ececec" fill-rule="evenodd"/>
<path d="M944.7,538.5 h3.200 l-1.600,1.900 z" fill="#e6e6e6"/>
<path d="M957.300,534.800 v9 M952.800,539.300 h9" stroke="#ececec" stroke-width="1"/>
<rect x="967.500" y="535" width="3" height="3" fill="none" stroke="#d0d0d0" stroke-width="0.6"/><circle cx="974.800" cy="538.500" r="1.700" fill="none" stroke="#d0d0d0" stroke-width="0.6"/><path d="M969,544 l2,-3.500 l2,3.500 z" fill="none" stroke="#d0d0d0" stroke-width="0.6"/>
<path d="M982,538 l3,-3 l3,3 v1.500 h-6 z" fill="#8fc0e8"/><rect x="981.500" y="539.500" width="5" height="3.500" fill="#e8c050"/><rect x="987" y="541" width="1.500" height="1.500" fill="#30c030"/><rect x="985" y="537" width="2.500" height="2.500" fill="#f0f0f0"/>
<rect x="995" y="535.500" width="8.500" height="7" fill="none" stroke="#e0e0e0" stroke-width="0.8"/><path d="M996.500,539.500 v1.800 h2 M1000,537 h2 v1.800" stroke="#e0e0e0" stroke-width="0.6" fill="none"/>
<path d="M1007.500,536 h8.500 M1007.500,539.200 h8.500 M1007.500,542.400 h8.500" stroke="#ececec" stroke-width="1.100"/>
</svg>
</div>

</div>
<div style="position:absolute;left:997px;top:547.300px;width:12.500px;height:3.200px;background:#cfcfcf;border-left:1px solid #4a7fc4;border-right:1px solid #4a7fc4;box-sizing:border-box"></div>
<div style="position:absolute;left:0;top:2px;width:5px;height:545px;background:#efefef"></div>
</body></html>
